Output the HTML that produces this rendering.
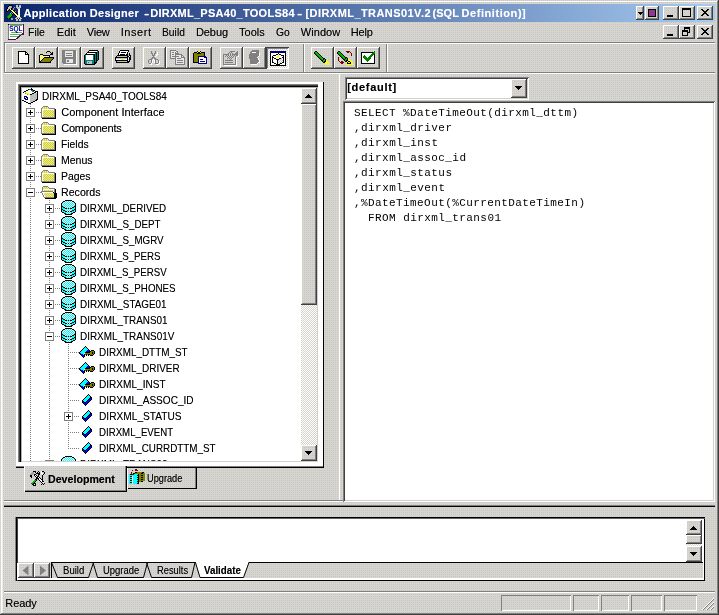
<!DOCTYPE html>
<html lang="en"><head><meta charset="utf-8"><title>Application Designer</title>
<style>
html,body{margin:0;padding:0}
body{width:719px;height:615px;overflow:hidden;background:#d4d3cd;position:relative;font:11px "Liberation Sans",sans-serif}
#app{will-change:transform;--face:repeating-conic-gradient(#c6c6ca 0 25%,#d7d6ce 0 100%) 0 0/2px 2px;position:absolute;left:0;top:0;width:719px;height:615px;overflow:hidden;background:var(--face)}
#app div,#app svg,#app span.t{position:absolute;display:block}
#app section{display:contents}
span.t{white-space:pre;text-shadow:0 0 0 rgba(0,0,0,.45)}
span.w{text-shadow:0 0 0 rgba(255,255,255,.45)}
span.m{text-shadow:none}
</style></head>
<body><div id="app">
<section id="frame" aria-label="Window frame">
<div style="left:1px;top:1px;width:1px;height:612px;background:#fff;"></div>
<div style="left:1px;top:1px;width:716px;height:1px;background:#fff;"></div>
<div style="left:717px;top:1px;width:1px;height:613px;background:#808080;"></div>
<div style="left:1px;top:613px;width:717px;height:1px;background:#808080;"></div>
<div style="left:718px;top:0px;width:1px;height:615px;background:#404040;"></div>
<div style="left:0px;top:614px;width:719px;height:1px;background:#404040;"></div>
</section>
<section id="titlebar" aria-label="Title bar">
<div style="left:4px;top:4px;width:711px;height:18px;background:linear-gradient(to right,#0a246a,#a6caf0);"></div>
<svg style="left:6px;top:5px" width="16" height="16" viewBox="0 0 16 16" shape-rendering="crispEdges"><path fill="#000" d="M3 0h3v1h-3zM2 1h1v1h-1zM6 1h1v1h-1zM1 2h1v1h-1zM6 2h1v1h-1zM1 3h1v1h-1zM5 3h1v1h-1zM0 4h1v1h-1zM3 4h1v1h-1zM5 4h1v1h-1zM0 5h1v1h-1zM2 5h1v1h-1zM4 5h1v1h-1zM7 5h1v1h-1zM0 6h2v1h-2zM5 6h1v1h-1zM8 6h1v1h-1zM6 7h1v1h-1zM9 7h1v1h-1zM7 8h1v1h-1zM10 8h1v1h-1zM6 9h1v1h-1zM8 9h1v1h-1zM11 9h1v1h-1zM6 10h1v1h-1zM9 10h1v1h-1zM5 11h1v1h-1zM10 11h1v1h-1zM4 12h1v1h-1zM1 13h1v1h-1zM3 13h1v1h-1z"/><path fill="#c0c0c0" d="M10 0h2v1h-2zM13 0h2v1h-2zM3 1h2v1h-2zM10 1h2v1h-2zM13 1h2v1h-2zM2 2h3v1h-3zM10 2h5v1h-5zM2 3h2v1h-2zM11 3h3v1h-3zM1 4h2v1h-2zM1 5h1v1h-1zM10 12h5v1h-5zM9 13h2v1h-2zM14 13h2v1h-2zM10 14h2v1h-2zM13 14h2v1h-2zM10 15h2v1h-2zM13 15h2v1h-2z"/><path fill="#a0a0a0" d="M5 1h1v1h-1zM5 2h1v1h-1zM8 2h1v1h-1zM4 3h1v1h-1zM7 3h1v1h-1zM7 4h1v1h-1zM9 6h1v1h-1zM5 7h1v1h-1zM4 8h1v1h-1zM6 8h1v1h-1zM5 13h2v1h-2zM5 14h2v1h-2z"/><path fill="#ffff80" d="M4 4h1v1h-1zM5 5h2v1h-2zM6 6h2v1h-2zM7 7h2v1h-2zM8 8h2v1h-2zM9 9h2v1h-2zM10 10h2v1h-2zM11 11h1v1h-1zM12 13h1v1h-1z"/><path fill="#fff" d="M12 4h2v1h-2zM12 5h2v1h-2zM12 6h2v1h-2zM12 7h2v1h-2zM12 8h2v1h-2zM12 9h2v1h-2zM12 10h2v1h-2zM12 11h2v1h-2z"/><path fill="#008000" d="M3 9h1v1h-1zM2 10h1v1h-1zM1 11h1v1h-1zM1 12h1v1h-1zM2 13h1v1h-1z"/><path fill="#00c000" d="M4 9h2v1h-2zM3 10h3v1h-3zM2 11h3v1h-3zM2 12h2v1h-2z"/></svg>
<span class="t w" style="left:23.6px;top:6.50px;font:bold 11px 'Liberation Sans',sans-serif;line-height:13px;color:#fff;letter-spacing:0.272px;">Application Designer </span>
<span class="t w" style="left:144.3px;top:6.50px;font:bold 11px 'Liberation Sans',sans-serif;line-height:13px;color:#fff;transform:scaleX(1.4434);transform-origin:0 0;">- </span>
<span class="t w" style="left:150.2px;top:6.50px;font:bold 11px 'Liberation Sans',sans-serif;line-height:13px;color:#fff;letter-spacing:0.272px;">DIRXML_PSA40_TOOLS84 </span>
<span class="t w" style="left:297.3px;top:6.50px;font:bold 11px 'Liberation Sans',sans-serif;line-height:13px;color:#fff;transform:scaleX(1.4434);transform-origin:0 0;">- </span>
<span class="t w" style="left:305.5px;top:6.50px;font:bold 11px 'Liberation Sans',sans-serif;line-height:13px;color:#fff;letter-spacing:0.437px;">[DIRXML_TRANS01V.2 </span>
<span class="t w" style="left:432.4px;top:6.50px;font:bold 11px 'Liberation Sans',sans-serif;line-height:13px;color:#fff;letter-spacing:0.106px;">(SQL </span>
<span class="t w" style="left:461.5px;top:6.50px;font:bold 11px 'Liberation Sans',sans-serif;line-height:13px;color:#fff;letter-spacing:0.568px;">Definition)]</span>
<div style="left:636px;top:6px;width:8px;height:14px;background:var(--face);box-shadow:inset -1px -1px #404040,inset 1px 1px #fff,inset -2px -2px #808080,inset 2px 2px #d4d0c8;"></div>
<svg style="left:636px;top:6px" width="8" height="14" viewBox="0 0 8 14" shape-rendering="crispEdges"><path d="M2 6h5v1h-1v1h-1v1h-1v-1h-1v-1h-1z" fill="#000"/></svg>
<div style="left:645px;top:6px;width:14px;height:14px;background:var(--face);box-shadow:inset -1px -1px #404040,inset 1px 1px #fff,inset -2px -2px #808080,inset 2px 2px #d4d0c8;"></div>
<svg style="left:645px;top:6px" width="14" height="14" viewBox="0 0 14 14" shape-rendering="crispEdges"><rect x="3" y="3" width="8" height="8" fill="#000"/><rect x="4" y="4" width="6" height="6" fill="#903890"/></svg>
<div style="left:663px;top:6px;width:16px;height:14px;background:var(--face);box-shadow:inset -1px -1px #404040,inset 1px 1px #fff,inset -2px -2px #808080,inset 2px 2px #d4d0c8;"></div>
<svg style="left:663px;top:6px" width="16" height="14" viewBox="0 0 16 14" shape-rendering="crispEdges"><rect x="4" y="9" width="6" height="2" fill="#000"/></svg>
<div style="left:679px;top:6px;width:16px;height:14px;background:var(--face);box-shadow:inset -1px -1px #404040,inset 1px 1px #fff,inset -2px -2px #808080,inset 2px 2px #d4d0c8;"></div>
<svg style="left:679px;top:6px" width="16" height="14" viewBox="0 0 16 14" shape-rendering="crispEdges"><path d="M3 2h9v9h-9z M4 4v6h7v-6z" fill="#000" fill-rule="evenodd"/></svg>
<div style="left:697px;top:6px;width:16px;height:14px;background:var(--face);box-shadow:inset -1px -1px #404040,inset 1px 1px #fff,inset -2px -2px #808080,inset 2px 2px #d4d0c8;"></div>
<svg style="left:697px;top:6px" width="16" height="14" viewBox="0 0 16 14" shape-rendering="crispEdges"><path d="M4 3h2v1h1v1h2v-1h1v-1h2v1h-1v1h-1v1h-1v1h1v1h1v1h1v1h-2v-1h-1v-1h-2v1h-1v1h-2v-1h1v-1h1v-1h1v-1h-1v-1h-1v-1h-1z" fill="#000"/></svg>
<div style="left:663px;top:25px;width:16px;height:14px;background:var(--face);box-shadow:inset -1px -1px #404040,inset 1px 1px #fff,inset -2px -2px #808080,inset 2px 2px #d4d0c8;"></div>
<svg style="left:663px;top:25px" width="16" height="14" viewBox="0 0 16 14" shape-rendering="crispEdges"><rect x="4" y="9" width="6" height="2" fill="#000"/></svg>
<div style="left:679px;top:25px;width:16px;height:14px;background:var(--face);box-shadow:inset -1px -1px #404040,inset 1px 1px #fff,inset -2px -2px #808080,inset 2px 2px #d4d0c8;"></div>
<svg style="left:679px;top:25px" width="16" height="14" viewBox="0 0 16 14" shape-rendering="crispEdges"><path d="M5 2h6v6h-2v-1h1v-3h-4v1h-1z M3 5h6v6h-6z M4 7v3h4v-3z" fill="#000" fill-rule="evenodd"/></svg>
<div style="left:697px;top:25px;width:16px;height:14px;background:var(--face);box-shadow:inset -1px -1px #404040,inset 1px 1px #fff,inset -2px -2px #808080,inset 2px 2px #d4d0c8;"></div>
<svg style="left:697px;top:25px" width="16" height="14" viewBox="0 0 16 14" shape-rendering="crispEdges"><path d="M4 3h2v1h1v1h2v-1h1v-1h2v1h-1v1h-1v1h-1v1h1v1h1v1h1v1h-2v-1h-1v-1h-2v1h-1v1h-2v-1h1v-1h1v-1h1v-1h-1v-1h-1v-1h-1z" fill="#000"/></svg>
</section>
<section id="menubar" aria-label="Menu bar">
<svg style="left:8px;top:24px" width="16" height="16" viewBox="0 0 16 16" shape-rendering="crispEdges"><path fill="#000" d="M0 0h1v1h-1z"/><path fill="#808080" d="M1 0h14v1h-14zM0 1h1v1h-1zM0 2h1v1h-1zM0 3h1v1h-1zM0 4h1v1h-1zM0 5h1v1h-1zM0 6h1v1h-1zM0 7h1v1h-1zM0 8h1v1h-1zM0 9h1v1h-1zM0 10h1v1h-1zM0 11h1v1h-1zM0 12h1v1h-1zM0 13h1v1h-1zM0 14h1v1h-1z"/><path fill="#600060" d="M15 0h1v1h-1zM15 1h1v1h-1zM15 2h1v1h-1zM15 3h1v1h-1zM15 4h1v1h-1zM15 5h1v1h-1zM15 6h1v1h-1zM15 7h1v1h-1zM15 8h1v1h-1zM14 9h2v1h-2zM13 10h3v1h-3zM11 11h2v1h-2zM10 12h2v1h-2zM9 13h2v1h-2zM8 14h2v1h-2zM0 15h8v1h-8z"/><path fill="#fff" d="M1 1h1v1h-1zM14 1h1v1h-1zM1 2h14v1h-14zM1 3h14v1h-14zM1 4h14v1h-14zM1 5h14v1h-14zM1 6h14v1h-14zM1 7h14v1h-14zM1 8h2v1h-2zM14 8h1v1h-1zM1 9h13v1h-13zM1 10h1v1h-1zM1 11h10v1h-10zM1 12h1v1h-1zM1 13h8v1h-8zM1 14h7v1h-7z"/><path fill="#58b858" d="M2 1h12v1h-12zM3 8h11v1h-11zM2 10h11v1h-11zM2 12h8v1h-8z"/></svg>
<svg style="left:8px;top:24px" width="16" height="16" viewBox="0 0 16 16"><text x="1.2" y="7.2" font-family="Liberation Sans, sans-serif" font-weight="bold" font-size="6.6" fill="#000090" textLength="13.4" lengthAdjust="spacingAndGlyphs">SQL</text></svg>
<span class="t" style="left:28.4px;top:25.50px;font:11px 'Liberation Sans',sans-serif;line-height:13px;color:#000;transform:scaleX(0.9530);transform-origin:0 0;">File</span>
<span class="t" style="left:56.8px;top:25.50px;font:11px 'Liberation Sans',sans-serif;line-height:13px;color:#000;letter-spacing:0.010px;">Edit</span>
<span class="t" style="left:86.8px;top:25.50px;font:11px 'Liberation Sans',sans-serif;line-height:13px;color:#000;letter-spacing:-0.219px;">View</span>
<span class="t" style="left:120.7px;top:25.50px;font:11px 'Liberation Sans',sans-serif;line-height:13px;color:#000;letter-spacing:0.557px;">Insert</span>
<span class="t" style="left:161.9px;top:25.50px;font:11px 'Liberation Sans',sans-serif;line-height:13px;color:#000;transform:scaleX(0.9359);transform-origin:0 0;">Build</span>
<span class="t" style="left:195.9px;top:25.50px;font:11px 'Liberation Sans',sans-serif;line-height:13px;color:#000;letter-spacing:-0.055px;">Debug</span>
<span class="t" style="left:239.0px;top:25.50px;font:11px 'Liberation Sans',sans-serif;line-height:13px;color:#000;letter-spacing:0.028px;">Tools</span>
<span class="t" style="left:276.0px;top:25.50px;font:11px 'Liberation Sans',sans-serif;line-height:13px;color:#000;transform:scaleX(0.9396);transform-origin:0 0;">Go</span>
<span class="t" style="left:300.8px;top:25.50px;font:11px 'Liberation Sans',sans-serif;line-height:13px;color:#000;letter-spacing:0.055px;">Window</span>
<span class="t" style="left:350.8px;top:25.50px;font:11px 'Liberation Sans',sans-serif;line-height:13px;color:#000;letter-spacing:-0.208px;">Help</span>
</section>
<section id="toolbars" aria-label="Toolbars">
<div style="left:4px;top:42px;width:711px;height:1px;background:#808080;"></div>
<div style="left:4px;top:43px;width:711px;height:1px;background:#fff;"></div>
<div style="left:4px;top:43px;width:1px;height:29px;background:#808080;"></div>
<div style="left:5px;top:44px;width:1px;height:28px;background:#fff;"></div>
<div style="left:303px;top:44px;width:1px;height:28px;background:#808080;"></div>
<div style="left:304px;top:44px;width:1px;height:28px;background:#fff;"></div>
<div style="left:386px;top:44px;width:1px;height:28px;background:#808080;"></div>
<div style="left:387px;top:44px;width:1px;height:28px;background:#fff;"></div>
<div style="left:4px;top:72px;width:711px;height:1px;background:#808080;"></div>
<div style="left:4px;top:73px;width:711px;height:1px;background:#fff;"></div>
<div style="left:12px;top:47px;width:23px;height:22px;background:var(--face);box-shadow:inset -1px -1px #404040,inset 1px 1px #fff,inset -2px -2px #808080,inset 2px 2px #d4d0c8;"></div>
<svg style="left:15px;top:50px" width="16" height="15" viewBox="0 0 16 15" shape-rendering="crispEdges"><path fill="#000" d="M3 1h8v1h-8zM3 2h1v1h-1zM10 2h2v1h-2zM3 3h1v1h-1zM10 3h1v1h-1zM12 3h1v1h-1zM3 4h1v1h-1zM10 4h4v1h-4zM3 5h1v1h-1zM13 5h1v1h-1zM3 6h1v1h-1zM13 6h1v1h-1zM3 7h1v1h-1zM13 7h1v1h-1zM3 8h1v1h-1zM13 8h1v1h-1zM3 9h1v1h-1zM13 9h1v1h-1zM3 10h1v1h-1zM13 10h1v1h-1zM3 11h1v1h-1zM13 11h1v1h-1zM3 12h1v1h-1zM13 12h1v1h-1zM3 13h11v1h-11z"/><path fill="#fff" d="M4 2h6v1h-6zM4 3h6v1h-6zM11 3h1v1h-1zM4 4h6v1h-6zM4 5h9v1h-9zM4 6h9v1h-9zM4 7h9v1h-9zM4 8h9v1h-9zM4 9h9v1h-9zM4 10h9v1h-9zM4 11h9v1h-9zM4 12h9v1h-9z"/></svg>
<div style="left:35px;top:47px;width:23px;height:22px;background:var(--face);box-shadow:inset -1px -1px #404040,inset 1px 1px #fff,inset -2px -2px #808080,inset 2px 2px #d4d0c8;"></div>
<svg style="left:38px;top:50px" width="16" height="15" viewBox="0 0 16 15" shape-rendering="crispEdges"><path fill="#000" d="M9 1h3v1h-3zM8 2h1v1h-1zM12 2h1v1h-1zM14 2h1v1h-1zM13 3h2v1h-2zM2 4h3v1h-3zM12 4h3v1h-3zM1 5h1v1h-1zM5 5h7v1h-7zM1 6h1v1h-1zM11 6h1v1h-1zM1 7h1v1h-1zM6 7h10v1h-10zM1 8h1v1h-1zM5 8h1v1h-1zM15 8h1v1h-1zM1 9h1v1h-1zM4 9h1v1h-1zM14 9h1v1h-1zM1 10h1v1h-1zM3 10h1v1h-1zM13 10h1v1h-1zM1 11h2v1h-2zM12 11h1v1h-1zM1 12h12v1h-12z"/><path fill="#ffff00" d="M2 5h1v1h-1zM4 5h1v1h-1zM3 6h1v1h-1zM5 6h1v1h-1zM7 6h1v1h-1zM9 6h1v1h-1zM2 7h1v1h-1zM4 7h1v1h-1zM3 8h1v1h-1zM2 9h1v1h-1z"/><path fill="#fff" d="M3 5h1v1h-1zM2 6h1v1h-1zM4 6h1v1h-1zM6 6h1v1h-1zM8 6h1v1h-1zM10 6h1v1h-1zM3 7h1v1h-1zM5 7h1v1h-1zM2 8h1v1h-1zM4 8h1v1h-1zM3 9h1v1h-1zM2 10h1v1h-1z"/><path fill="#808000" d="M6 8h9v1h-9zM5 9h9v1h-9zM4 10h9v1h-9zM3 11h9v1h-9z"/></svg>
<div style="left:58px;top:47px;width:23px;height:22px;background:var(--face);box-shadow:inset -1px -1px #404040,inset 1px 1px #fff,inset -2px -2px #808080,inset 2px 2px #d4d0c8;"></div>
<svg style="left:61px;top:50px" width="16" height="15" viewBox="0 0 16 15" shape-rendering="crispEdges"><path fill="#808080" d="M1 0h14v1h-14zM1 1h3v1h-3zM12 1h3v1h-3zM1 2h3v1h-3zM12 2h3v1h-3zM1 3h3v1h-3zM5 3h6v1h-6zM12 3h3v1h-3zM1 4h3v1h-3zM12 4h3v1h-3zM1 5h3v1h-3zM5 5h6v1h-6zM12 5h3v1h-3zM1 6h3v1h-3zM12 6h3v1h-3zM1 7h14v1h-14zM1 8h14v1h-14zM1 9h4v1h-4zM12 9h3v1h-3zM1 10h4v1h-4zM6 10h2v1h-2zM12 10h3v1h-3zM1 11h4v1h-4zM6 11h2v1h-2zM12 11h3v1h-3zM1 12h4v1h-4zM12 12h3v1h-3zM2 13h13v1h-13z"/><path fill="#e8e8e8" d="M4 1h8v1h-8zM4 2h8v1h-8zM4 3h1v1h-1zM11 3h1v1h-1zM4 4h8v1h-8zM4 5h1v1h-1zM11 5h1v1h-1zM4 6h8v1h-8zM5 9h7v1h-7zM5 10h1v1h-1zM8 10h4v1h-4zM5 11h1v1h-1zM8 11h4v1h-4zM5 12h7v1h-7z"/><path fill="#fff" d="M15 1h1v1h-1zM15 2h1v1h-1zM15 3h1v1h-1zM15 4h1v1h-1zM15 5h1v1h-1zM15 6h1v1h-1zM15 7h1v1h-1zM15 8h1v1h-1zM15 9h1v1h-1zM15 10h1v1h-1zM15 11h1v1h-1zM15 12h1v1h-1zM15 13h1v1h-1zM3 14h13v1h-13z"/></svg>
<div style="left:81px;top:47px;width:23px;height:22px;background:var(--face);box-shadow:inset -1px -1px #404040,inset 1px 1px #fff,inset -2px -2px #808080,inset 2px 2px #d4d0c8;"></div>
<svg style="left:84px;top:50px" width="16" height="15" viewBox="0 0 16 15" shape-rendering="crispEdges"><path fill="#000" d="M5 0h9v1h-9zM4 1h1v1h-1zM14 1h1v1h-1zM3 2h10v1h-10zM14 2h1v1h-1zM2 3h1v1h-1zM12 3h1v1h-1zM14 3h1v1h-1zM1 4h10v1h-10zM12 4h1v1h-1zM14 4h1v1h-1zM0 5h1v1h-1zM10 5h1v1h-1zM12 5h1v1h-1zM14 5h1v1h-1zM0 6h1v1h-1zM10 6h1v1h-1zM12 6h1v1h-1zM14 6h1v1h-1zM0 7h1v1h-1zM10 7h1v1h-1zM12 7h1v1h-1zM14 7h1v1h-1zM0 8h1v1h-1zM10 8h1v1h-1zM12 8h1v1h-1zM14 8h1v1h-1zM0 9h1v1h-1zM10 9h1v1h-1zM12 9h1v1h-1zM14 9h1v1h-1zM0 10h1v1h-1zM10 10h1v1h-1zM12 10h2v1h-2zM0 11h1v1h-1zM10 11h1v1h-1zM12 11h1v1h-1zM0 12h1v1h-1zM10 12h3v1h-3zM0 13h1v1h-1zM10 13h2v1h-2zM1 14h10v1h-10z"/><path fill="#fff" d="M5 1h8v1h-8zM3 3h8v1h-8zM2 5h7v1h-7zM2 6h7v1h-7zM2 7h7v1h-7zM2 8h7v1h-7zM2 9h7v1h-7z"/><path fill="#008080" d="M13 1h1v1h-1zM13 2h1v1h-1zM11 3h1v1h-1zM13 3h1v1h-1zM11 4h1v1h-1zM13 4h1v1h-1zM1 5h1v1h-1zM9 5h1v1h-1zM11 5h1v1h-1zM13 5h1v1h-1zM1 6h1v1h-1zM9 6h1v1h-1zM11 6h1v1h-1zM13 6h1v1h-1zM1 7h1v1h-1zM9 7h1v1h-1zM11 7h1v1h-1zM13 7h1v1h-1zM1 8h1v1h-1zM9 8h1v1h-1zM11 8h1v1h-1zM13 8h1v1h-1zM1 9h1v1h-1zM9 9h1v1h-1zM11 9h1v1h-1zM13 9h1v1h-1zM1 10h9v1h-9zM11 10h1v1h-1zM1 11h2v1h-2zM8 11h2v1h-2zM11 11h1v1h-1zM1 12h2v1h-2zM4 12h1v1h-1zM8 12h2v1h-2zM1 13h2v1h-2zM8 13h2v1h-2z"/><path fill="#c0c0c0" d="M3 11h5v1h-5zM3 12h1v1h-1zM5 12h3v1h-3zM3 13h5v1h-5z"/></svg>
<div style="left:112px;top:47px;width:23px;height:22px;background:var(--face);box-shadow:inset -1px -1px #404040,inset 1px 1px #fff,inset -2px -2px #808080,inset 2px 2px #d4d0c8;"></div>
<svg style="left:115px;top:50px" width="16" height="15" viewBox="0 0 16 15" shape-rendering="crispEdges"><path fill="#000" d="M5 0h9v1h-9zM4 1h1v1h-1zM13 1h1v1h-1zM4 2h1v1h-1zM6 2h5v1h-5zM12 2h1v1h-1zM3 3h1v1h-1zM12 3h1v1h-1zM14 3h1v1h-1zM3 4h1v1h-1zM5 4h5v1h-5zM11 4h2v1h-2zM14 4h1v1h-1zM2 5h11v1h-11zM14 5h2v1h-2zM1 6h1v1h-1zM12 6h2v1h-2zM15 6h1v1h-1zM0 7h13v1h-13zM14 7h2v1h-2zM0 8h1v1h-1zM12 8h1v1h-1zM14 8h2v1h-2zM0 9h1v1h-1zM12 9h1v1h-1zM14 9h2v1h-2zM0 10h13v1h-13zM14 10h1v1h-1zM1 11h1v1h-1zM12 11h3v1h-3zM1 12h13v1h-13z"/><path fill="#fff" d="M5 1h8v1h-8zM5 2h1v1h-1zM11 2h1v1h-1zM4 3h8v1h-8zM4 4h1v1h-1zM10 4h1v1h-1zM14 6h1v1h-1zM13 8h1v1h-1zM1 9h5v1h-5zM9 9h3v1h-3zM13 10h1v1h-1z"/><path fill="#c0c0c0" d="M13 4h1v1h-1zM13 5h1v1h-1zM2 6h10v1h-10zM13 7h1v1h-1zM1 8h11v1h-11zM13 9h1v1h-1zM2 11h10v1h-10z"/><path fill="#ffff00" d="M6 9h3v1h-3z"/></svg>
<div style="left:143px;top:47px;width:23px;height:22px;background:var(--face);box-shadow:inset -1px -1px #404040,inset 1px 1px #fff,inset -2px -2px #808080,inset 2px 2px #d4d0c8;"></div>
<svg style="left:146px;top:50px" width="16" height="15" viewBox="0 0 16 15" shape-rendering="crispEdges"><path fill="#808080" d="M5 1h1v1h-1zM9 1h1v1h-1zM5 2h1v1h-1zM9 2h1v1h-1zM5 3h2v1h-2zM8 3h2v1h-2zM6 4h1v1h-1zM8 4h1v1h-1zM6 5h3v1h-3zM7 6h1v1h-1zM6 7h3v1h-3zM5 8h2v1h-2zM8 8h2v1h-2zM3 9h3v1h-3zM9 9h3v1h-3zM2 10h1v1h-1zM5 10h1v1h-1zM9 10h1v1h-1zM12 10h1v1h-1zM2 11h1v1h-1zM5 11h1v1h-1zM9 11h1v1h-1zM12 11h1v1h-1zM2 12h1v1h-1zM5 12h1v1h-1zM9 12h1v1h-1zM12 12h1v1h-1zM3 13h2v1h-2zM9 13h3v1h-3z"/><path fill="#fff" d="M11 2h1v1h-1zM11 3h1v1h-1zM10 4h2v1h-2zM10 5h1v1h-1zM9 6h1v1h-1zM7 9h1v1h-1zM6 10h1v1h-1zM8 10h1v1h-1zM6 11h1v1h-1zM8 11h1v1h-1zM13 11h1v1h-1zM6 12h1v1h-1zM8 12h1v1h-1zM13 12h1v1h-1zM5 13h1v1h-1zM13 13h1v1h-1zM4 14h2v1h-2zM10 14h3v1h-3z"/></svg>
<div style="left:166px;top:47px;width:23px;height:22px;background:var(--face);box-shadow:inset -1px -1px #404040,inset 1px 1px #fff,inset -2px -2px #808080,inset 2px 2px #d4d0c8;"></div>
<svg style="left:169px;top:50px" width="16" height="15" viewBox="0 0 16 15" shape-rendering="crispEdges"><path fill="#808080" d="M1 0h6v1h-6zM1 1h1v1h-1zM7 1h2v1h-2zM1 2h1v1h-1zM3 2h2v1h-2zM6 2h1v1h-1zM8 2h1v1h-1zM1 3h1v1h-1zM6 3h4v1h-4zM1 4h1v1h-1zM3 4h2v1h-2zM6 4h7v1h-7zM1 5h1v1h-1zM6 5h1v1h-1zM12 5h2v1h-2zM1 6h1v1h-1zM3 6h7v1h-7zM12 6h1v1h-1zM14 6h1v1h-1zM1 7h1v1h-1zM6 7h1v1h-1zM12 7h4v1h-4zM1 8h6v1h-6zM8 8h4v1h-4zM15 8h1v1h-1zM6 9h1v1h-1zM15 9h1v1h-1zM6 10h1v1h-1zM8 10h6v1h-6zM15 10h1v1h-1zM6 11h1v1h-1zM15 11h1v1h-1zM6 12h1v1h-1zM8 12h6v1h-6zM15 12h1v1h-1zM6 13h1v1h-1zM15 13h1v1h-1zM6 14h10v1h-10z"/><path fill="#e8e8e8" d="M2 1h5v1h-5zM2 2h1v1h-1zM5 2h1v1h-1zM7 2h1v1h-1zM2 3h4v1h-4zM2 4h1v1h-1zM5 4h1v1h-1zM2 5h4v1h-4zM7 5h5v1h-5zM2 6h1v1h-1zM10 6h2v1h-2zM13 6h1v1h-1zM2 7h4v1h-4zM7 7h5v1h-5zM7 8h1v1h-1zM12 8h3v1h-3zM7 9h8v1h-8zM7 10h1v1h-1zM14 10h1v1h-1zM7 11h8v1h-8zM7 12h1v1h-1zM14 12h1v1h-1zM7 13h8v1h-8z"/></svg>
<div style="left:189px;top:47px;width:23px;height:22px;background:var(--face);box-shadow:inset -1px -1px #404040,inset 1px 1px #fff,inset -2px -2px #808080,inset 2px 2px #d4d0c8;"></div>
<svg style="left:192px;top:50px" width="16" height="15" viewBox="0 0 16 15" shape-rendering="crispEdges"><path fill="#000" d="M5 1h1v1h-1zM8 1h1v1h-1zM2 2h3v1h-3zM6 2h2v1h-2zM9 2h4v1h-4zM1 3h1v1h-1zM5 3h4v1h-4zM12 3h1v1h-1zM1 4h1v1h-1zM12 4h1v1h-1zM1 5h1v1h-1zM12 5h1v1h-1zM1 6h1v1h-1zM1 7h1v1h-1zM1 8h1v1h-1zM1 9h1v1h-1zM1 10h1v1h-1zM1 11h1v1h-1zM1 12h5v1h-5z"/><path fill="#ffff00" d="M6 1h2v1h-2zM5 2h1v1h-1zM8 2h1v1h-1z"/><path fill="#808000" d="M2 3h3v1h-3zM9 3h3v1h-3zM2 4h10v1h-10zM2 5h10v1h-10zM2 6h4v1h-4zM2 7h4v1h-4zM2 8h4v1h-4zM2 9h4v1h-4zM2 10h4v1h-4zM2 11h4v1h-4z"/><path fill="#000080" d="M6 6h8v1h-8zM6 7h1v1h-1zM12 7h3v1h-3zM6 8h1v1h-1zM14 8h1v1h-1zM6 9h1v1h-1zM8 9h3v1h-3zM14 9h1v1h-1zM6 10h1v1h-1zM14 10h1v1h-1zM6 11h1v1h-1zM8 11h5v1h-5zM14 11h1v1h-1zM6 12h1v1h-1zM14 12h1v1h-1zM6 13h9v1h-9z"/><path fill="#fff" d="M7 7h5v1h-5zM7 8h7v1h-7zM7 9h1v1h-1zM11 9h3v1h-3zM7 10h7v1h-7zM7 11h1v1h-1zM13 11h1v1h-1zM7 12h7v1h-7z"/></svg>
<div style="left:220px;top:47px;width:23px;height:22px;background:var(--face);box-shadow:inset -1px -1px #404040,inset 1px 1px #fff,inset -2px -2px #808080,inset 2px 2px #d4d0c8;"></div>
<svg style="left:223px;top:50px" width="16" height="16" viewBox="0 0 16 16" shape-rendering="crispEdges"><path fill="#808080" d="M7 1h5v1h-5zM14 1h1v1h-1zM6 2h1v1h-1zM8 2h1v1h-1zM13 2h2v1h-2zM5 3h1v1h-1zM7 3h1v1h-1zM9 3h1v1h-1zM12 3h3v1h-3zM0 4h6v1h-6zM7 4h1v1h-1zM9 4h6v1h-6zM0 5h1v1h-1zM3 5h1v1h-1zM5 5h1v1h-1zM7 5h1v1h-1zM9 5h1v1h-1zM11 5h1v1h-1zM13 5h2v1h-2zM0 6h1v1h-1zM2 6h1v1h-1zM4 6h1v1h-1zM6 6h1v1h-1zM8 6h1v1h-1zM10 6h1v1h-1zM12 6h1v1h-1zM0 7h1v1h-1zM5 7h1v1h-1zM7 7h1v1h-1zM9 7h1v1h-1zM12 7h1v1h-1zM0 8h1v1h-1zM4 8h1v1h-1zM6 8h1v1h-1zM8 8h1v1h-1zM12 8h1v1h-1zM0 9h1v1h-1zM7 9h1v1h-1zM12 9h1v1h-1zM0 10h1v1h-1zM2 10h8v1h-8zM12 10h1v1h-1zM0 11h1v1h-1zM12 11h1v1h-1zM0 12h1v1h-1zM2 12h8v1h-8zM12 12h1v1h-1zM0 13h1v1h-1zM12 13h1v1h-1zM0 14h13v1h-13z"/><path fill="#fff" d="M15 5h1v1h-1zM15 6h1v1h-1zM13 7h1v1h-1zM13 8h1v1h-1zM13 9h1v1h-1zM13 10h1v1h-1zM13 11h1v1h-1zM13 12h1v1h-1zM13 13h1v1h-1zM13 14h1v1h-1zM1 15h13v1h-13z"/></svg>
<div style="left:243px;top:47px;width:23px;height:22px;background:var(--face);box-shadow:inset -1px -1px #404040,inset 1px 1px #fff,inset -2px -2px #808080,inset 2px 2px #d4d0c8;"></div>
<svg style="left:246px;top:50px" width="16" height="15" viewBox="0 0 16 15" shape-rendering="crispEdges"><path fill="#808080" d="M6 0h7v1h-7zM5 1h8v1h-8zM4 2h2v1h-2zM10 2h3v1h-3zM4 3h9v1h-9zM3 4h10v1h-10zM3 5h10v1h-10zM3 6h9v1h-9zM3 7h8v1h-8zM3 8h9v1h-9zM4 9h8v1h-8zM4 10h9v1h-9zM4 11h9v1h-9zM4 12h8v1h-8zM4 13h7v1h-7z"/><path fill="#fff" d="M6 2h4v1h-4zM13 3h1v1h-1zM13 4h1v1h-1zM13 5h1v1h-1zM12 6h1v1h-1zM11 7h1v1h-1zM12 8h1v1h-1zM12 9h1v1h-1zM13 10h1v1h-1zM13 11h1v1h-1zM12 12h2v1h-2zM11 13h1v1h-1zM5 14h6v1h-6z"/></svg>
<div style="left:266px;top:47px;width:23px;height:22px;background:repeating-conic-gradient(#fff 0 25%,#d5d4cc 0 50%) 0 0/2px 2px;box-shadow:inset 1px 1px #404040,inset -1px -1px #fff,inset 2px 2px #808080;"></div>
<svg style="left:270px;top:51px" width="16" height="15" viewBox="0 0 16 15" shape-rendering="crispEdges"><path fill="#000080" d="M0 0h16v1h-16zM0 1h16v1h-16z"/><path fill="#000" d="M0 2h1v1h-1zM8 2h1v1h-1zM15 2h1v1h-1zM0 3h1v1h-1zM6 3h2v1h-2zM9 3h2v1h-2zM15 3h1v1h-1zM0 4h1v1h-1zM3 4h3v1h-3zM11 4h3v1h-3zM15 4h1v1h-1zM0 5h1v1h-1zM2 5h1v1h-1zM13 5h1v1h-1zM15 5h1v1h-1zM0 6h1v1h-1zM2 6h2v1h-2zM12 6h2v1h-2zM15 6h1v1h-1zM0 7h1v1h-1zM2 7h1v1h-1zM4 7h2v1h-2zM9 7h2v1h-2zM13 7h1v1h-1zM15 7h1v1h-1zM0 8h1v1h-1zM2 8h1v1h-1zM6 8h3v1h-3zM13 8h1v1h-1zM15 8h1v1h-1zM0 9h1v1h-1zM2 9h1v1h-1zM7 9h1v1h-1zM13 9h1v1h-1zM15 9h1v1h-1zM0 10h1v1h-1zM2 10h1v1h-1zM7 10h1v1h-1zM13 10h1v1h-1zM15 10h1v1h-1zM0 11h1v1h-1zM2 11h2v1h-2zM7 11h1v1h-1zM12 11h2v1h-2zM15 11h1v1h-1zM0 12h1v1h-1zM4 12h2v1h-2zM7 12h1v1h-1zM10 12h2v1h-2zM15 12h1v1h-1zM0 13h1v1h-1zM6 13h4v1h-4zM15 13h1v1h-1zM0 14h16v1h-16z"/><path fill="#fff" d="M1 2h7v1h-7zM9 2h6v1h-6zM1 3h5v1h-5zM8 3h1v1h-1zM11 3h4v1h-4zM1 4h2v1h-2zM6 4h2v1h-2zM9 4h2v1h-2zM14 4h1v1h-1zM1 5h1v1h-1zM3 5h4v1h-4zM9 5h4v1h-4zM14 5h1v1h-1zM1 6h1v1h-1zM4 6h2v1h-2zM9 6h3v1h-3zM14 6h1v1h-1zM1 7h1v1h-1zM3 7h1v1h-1zM6 7h3v1h-3zM12 7h1v1h-1zM14 7h1v1h-1zM1 8h1v1h-1zM3 8h3v1h-3zM10 8h1v1h-1zM12 8h1v1h-1zM14 8h1v1h-1zM1 9h1v1h-1zM3 9h4v1h-4zM9 9h1v1h-1zM11 9h1v1h-1zM14 9h1v1h-1zM1 10h1v1h-1zM3 10h4v1h-4zM8 10h1v1h-1zM10 10h1v1h-1zM12 10h1v1h-1zM14 10h1v1h-1zM1 11h1v1h-1zM4 11h3v1h-3zM9 11h1v1h-1zM11 11h1v1h-1zM14 11h1v1h-1zM1 12h3v1h-3zM6 12h1v1h-1zM8 12h1v1h-1zM12 12h3v1h-3zM1 13h5v1h-5zM10 13h5v1h-5z"/><path fill="#ffff00" d="M8 4h1v1h-1zM7 5h2v1h-2zM6 6h3v1h-3z"/><path fill="#c0c0c0" d="M11 7h1v1h-1zM9 8h1v1h-1zM11 8h1v1h-1zM8 9h1v1h-1zM10 9h1v1h-1zM12 9h1v1h-1zM9 10h1v1h-1zM11 10h1v1h-1zM8 11h1v1h-1zM10 11h1v1h-1zM9 12h1v1h-1z"/></svg>
<div style="left:311px;top:47px;width:23px;height:22px;background:var(--face);box-shadow:inset -1px -1px #404040,inset 1px 1px #fff,inset -2px -2px #808080,inset 2px 2px #d4d0c8;"></div>
<svg style="left:314px;top:50px" width="16" height="15" viewBox="0 0 16 15" shape-rendering="crispEdges"><path fill="#000" d="M1 1h2v1h-2zM0 2h1v1h-1zM3 2h1v1h-1zM0 3h1v1h-1zM4 3h1v1h-1zM1 4h1v1h-1zM5 4h1v1h-1zM2 5h1v1h-1zM6 5h1v1h-1zM3 6h1v1h-1zM7 6h1v1h-1zM4 7h1v1h-1zM8 7h1v1h-1zM5 8h1v1h-1zM9 8h2v1h-2zM6 9h1v1h-1zM9 9h1v1h-1zM11 9h1v1h-1zM7 10h2v1h-2zM11 10h1v1h-1zM8 11h1v1h-1zM10 11h2v1h-2zM9 12h2v1h-2z"/><path fill="#00c000" d="M1 2h2v1h-2zM2 3h2v1h-2zM3 4h2v1h-2zM4 5h2v1h-2zM5 6h2v1h-2zM6 7h2v1h-2zM7 8h2v1h-2zM8 9h1v1h-1zM10 9h1v1h-1zM9 10h2v1h-2zM9 11h1v1h-1z"/><path fill="#008000" d="M1 3h1v1h-1zM2 4h1v1h-1zM3 5h1v1h-1zM4 6h1v1h-1zM5 7h1v1h-1zM6 8h1v1h-1zM7 9h1v1h-1z"/><path fill="#ffff00" d="M12 10h1v1h-1zM12 11h2v1h-2zM11 12h4v1h-4zM9 13h1v1h-1zM11 13h2v1h-2zM14 13h1v1h-1zM10 14h1v1h-1zM12 14h1v1h-1zM14 14h1v1h-1z"/></svg>
<div style="left:334px;top:47px;width:23px;height:22px;background:var(--face);box-shadow:inset -1px -1px #404040,inset 1px 1px #fff,inset -2px -2px #808080,inset 2px 2px #d4d0c8;"></div>
<svg style="left:337px;top:50px" width="16" height="15" viewBox="0 0 16 15" shape-rendering="crispEdges"><path fill="#000" d="M1 1h2v1h-2zM0 2h1v1h-1zM3 2h1v1h-1zM0 3h1v1h-1zM4 3h1v1h-1zM1 4h1v1h-1zM5 4h1v1h-1zM2 5h1v1h-1zM6 5h1v1h-1zM3 6h1v1h-1zM7 6h1v1h-1zM4 7h1v1h-1zM8 7h2v1h-2zM5 8h1v1h-1zM8 8h1v1h-1zM10 8h1v1h-1zM6 9h2v1h-2zM10 9h1v1h-1zM7 10h1v1h-1zM9 10h2v1h-2zM8 11h2v1h-2zM11 11h2v1h-2zM10 12h1v1h-1zM13 12h1v1h-1zM10 13h4v1h-4z"/><path fill="#800000" d="M9 1h4v1h-4zM10 2h2v1h-2zM13 2h1v1h-1zM14 3h1v1h-1zM14 4h1v1h-1zM14 5h1v1h-1zM1 7h1v1h-1zM1 8h1v1h-1zM1 9h1v1h-1zM1 10h1v1h-1zM2 11h1v1h-1zM4 11h2v1h-2zM3 12h4v1h-4zM4 13h2v1h-2z"/><path fill="#00c000" d="M1 2h2v1h-2zM2 3h2v1h-2zM3 4h2v1h-2zM4 5h2v1h-2zM5 6h2v1h-2zM6 7h2v1h-2zM7 8h1v1h-1zM9 8h1v1h-1zM8 9h2v1h-2zM8 10h1v1h-1z"/><path fill="#008000" d="M1 3h1v1h-1zM2 4h1v1h-1zM3 5h1v1h-1zM4 6h1v1h-1zM5 7h1v1h-1zM6 8h1v1h-1z"/><path fill="#ffff00" d="M11 9h2v1h-2zM11 10h3v1h-3zM10 11h1v1h-1zM13 11h2v1h-2zM9 12h1v1h-1zM11 12h2v1h-2zM14 12h2v1h-2zM9 13h1v1h-1zM14 13h2v1h-2zM9 14h7v1h-7z"/></svg>
<div style="left:357px;top:47px;width:23px;height:22px;background:var(--face);box-shadow:inset -1px -1px #404040,inset 1px 1px #fff,inset -2px -2px #808080,inset 2px 2px #d4d0c8;"></div>
<svg style="left:360px;top:50px" width="16" height="15" viewBox="0 0 16 15" shape-rendering="crispEdges"><path fill="#008000" d="M14 1h1v1h-1zM13 2h2v1h-2zM12 3h3v1h-3zM11 4h3v1h-3zM4 5h1v1h-1zM10 5h3v1h-3zM3 6h3v1h-3zM9 6h3v1h-3zM3 7h4v1h-4zM8 7h3v1h-3zM4 8h7v1h-7zM5 9h5v1h-5zM6 10h3v1h-3zM7 11h1v1h-1z"/><path fill="#000" d="M1 2h12v1h-12zM1 3h1v1h-1zM1 4h1v1h-1zM14 4h1v1h-1zM1 5h1v1h-1zM14 5h1v1h-1zM1 6h1v1h-1zM14 6h1v1h-1zM1 7h1v1h-1zM14 7h1v1h-1zM1 8h1v1h-1zM14 8h1v1h-1zM1 9h1v1h-1zM14 9h1v1h-1zM1 10h1v1h-1zM14 10h1v1h-1zM1 11h1v1h-1zM14 11h1v1h-1zM1 12h1v1h-1zM14 12h1v1h-1zM1 13h14v1h-14z"/><path fill="#fff" d="M2 3h10v1h-10zM2 4h9v1h-9zM2 5h2v1h-2zM5 5h5v1h-5zM13 5h1v1h-1zM2 6h1v1h-1zM6 6h3v1h-3zM12 6h2v1h-2zM2 7h1v1h-1zM7 7h1v1h-1zM11 7h3v1h-3zM2 8h2v1h-2zM11 8h3v1h-3zM2 9h3v1h-3zM10 9h4v1h-4zM2 10h4v1h-4zM9 10h5v1h-5zM2 11h5v1h-5zM8 11h6v1h-6zM2 12h12v1h-12z"/></svg>
</section>
<section id="project" aria-label="Project workspace">
<div style="left:2px;top:2px;width:1px;height:611px;background:#eeede8;"></div>
<div style="left:16px;top:82px;width:308px;height:386px;background:#fff;box-shadow:inset -1px 0 #000,inset 0 -1px #000,inset 0 -2px #808080;"></div>
<div style="left:18px;top:84px;width:300px;height:378px;background:#fff;box-shadow:inset 1px 1px #808080,inset 2px 2px #404040,inset 3px 3px #000,inset 4px 4px #b0b0b0,inset -1px -1px #d4d0c8;"></div>
<div style="left:22px;top:88px;width:279px;height:373px;overflow:hidden"><div style="left:8px;top:16px;width:1px;height:358px;background:repeating-linear-gradient(to bottom,#808080 0 1px,transparent 1px 2px);"></div><div style="left:27px;top:112px;width:1px;height:262px;background:repeating-linear-gradient(to bottom,#808080 0 1px,transparent 1px 2px);"></div><div style="left:46px;top:256px;width:1px;height:105px;background:repeating-linear-gradient(to bottom,#808080 0 1px,transparent 1px 2px);"></div><svg style="left:0px;top:0px" width="16" height="16" viewBox="0 0 16 16" shape-rendering="crispEdges"><path fill="#000" d="M9 0h1v1h-1zM6 1h1v1h-1zM9 1h2v1h-2zM4 2h2v1h-2zM11 2h2v1h-2zM2 3h2v1h-2zM13 3h3v1h-3zM1 4h1v1h-1zM12 4h2v1h-2zM15 4h1v1h-1zM10 5h2v1h-2zM15 5h1v1h-1zM8 6h2v1h-2zM15 6h1v1h-1zM15 7h1v1h-1zM15 8h1v1h-1zM15 9h1v1h-1zM15 10h1v1h-1zM14 11h2v1h-2zM0 12h2v1h-2zM13 12h2v1h-2zM2 13h2v1h-2zM11 13h2v1h-2zM4 14h2v1h-2zM9 14h2v1h-2zM6 15h3v1h-3z"/><path fill="#008080" d="M7 1h2v1h-2zM9 2h2v1h-2zM10 3h2v1h-2z"/><path fill="#fff" d="M7 2h2v1h-2zM5 3h5v1h-5zM5 4h7v1h-7zM1 5h2v1h-2zM7 5h3v1h-3zM1 6h4v1h-4zM1 7h7v1h-7zM1 8h1v1h-1zM5 8h3v1h-3zM1 9h1v1h-1zM3 9h1v1h-1zM6 9h2v1h-2zM1 10h1v1h-1zM4 10h1v1h-1zM6 10h2v1h-2zM1 11h2v1h-2zM6 11h2v1h-2zM2 12h6v1h-6zM4 13h4v1h-4zM6 14h2v1h-2z"/><path fill="#ffff00" d="M3 4h2v1h-2zM4 5h3v1h-3zM6 6h2v1h-2z"/><path fill="#808080" d="M3 5h1v1h-1zM5 6h1v1h-1z"/><path fill="#c0c0c0" d="M12 5h3v1h-3zM10 6h5v1h-5zM8 7h7v1h-7zM8 8h7v1h-7zM8 9h7v1h-7zM8 10h7v1h-7zM8 11h6v1h-6zM8 12h5v1h-5zM8 13h3v1h-3zM8 14h1v1h-1z"/><path fill="#000080" d="M2 8h3v1h-3zM2 9h1v1h-1zM4 9h2v1h-2zM2 10h2v1h-2zM5 10h1v1h-1zM3 11h3v1h-3z"/></svg><span class="t" style="left:20.2px;top:1.50px;font:11px 'Liberation Sans',sans-serif;line-height:13px;color:#000;transform:scaleX(0.9088);transform-origin:0 0;">DIRXML_PSA40_TOOLS84</span><div style="left:8px;top:24px;width:11px;height:1px;background:repeating-linear-gradient(to right,#808080 0 1px,transparent 1px 2px);"></div><div style="left:4px;top:20px;width:9px;height:9px;background:#fff;box-shadow:inset 0 0 0 1px #808080;"></div><div style="left:6px;top:24px;width:5px;height:1px;background:#000;"></div><div style="left:8px;top:22px;width:1px;height:5px;background:#000;"></div><svg style="left:19px;top:18px" width="15" height="13" viewBox="0 0 15 13" shape-rendering="crispEdges"><path fill="#808080" d="M2 0h5v1h-5zM1 1h1v1h-1zM7 1h1v1h-1zM0 2h1v1h-1zM8 2h6v1h-6zM0 3h1v1h-1zM13 3h1v1h-1zM0 4h1v1h-1zM13 4h1v1h-1zM0 5h1v1h-1zM13 5h1v1h-1zM0 6h1v1h-1zM13 6h1v1h-1zM0 7h1v1h-1zM13 7h1v1h-1zM0 8h1v1h-1zM13 8h1v1h-1zM0 9h1v1h-1zM13 9h1v1h-1zM0 10h1v1h-1zM13 10h1v1h-1zM0 11h14v1h-14z"/><path fill="#ffff00" d="M2 1h1v1h-1zM4 1h1v1h-1zM6 1h1v1h-1zM2 2h1v1h-1zM4 2h1v1h-1zM6 2h1v1h-1zM2 4h1v1h-1zM4 4h1v1h-1zM6 4h1v1h-1zM8 4h1v1h-1zM10 4h1v1h-1zM12 4h1v1h-1zM3 5h1v1h-1zM5 5h1v1h-1zM7 5h1v1h-1zM9 5h1v1h-1zM11 5h1v1h-1zM2 6h1v1h-1zM4 6h1v1h-1zM6 6h1v1h-1zM8 6h1v1h-1zM10 6h1v1h-1zM12 6h1v1h-1zM3 7h1v1h-1zM5 7h1v1h-1zM7 7h1v1h-1zM9 7h1v1h-1zM11 7h1v1h-1zM2 8h1v1h-1zM4 8h1v1h-1zM6 8h1v1h-1zM8 8h1v1h-1zM10 8h1v1h-1zM12 8h1v1h-1zM3 9h1v1h-1zM5 9h1v1h-1zM7 9h1v1h-1zM9 9h1v1h-1zM11 9h1v1h-1zM2 10h1v1h-1zM4 10h1v1h-1zM6 10h1v1h-1zM8 10h1v1h-1zM10 10h1v1h-1zM12 10h1v1h-1z"/><path fill="#c0c0c0" d="M3 1h1v1h-1zM5 1h1v1h-1zM1 2h1v1h-1zM3 2h1v1h-1zM5 2h1v1h-1zM7 2h1v1h-1zM3 4h1v1h-1zM5 4h1v1h-1zM7 4h1v1h-1zM9 4h1v1h-1zM11 4h1v1h-1zM2 5h1v1h-1zM4 5h1v1h-1zM6 5h1v1h-1zM8 5h1v1h-1zM10 5h1v1h-1zM12 5h1v1h-1zM3 6h1v1h-1zM5 6h1v1h-1zM7 6h1v1h-1zM9 6h1v1h-1zM11 6h1v1h-1zM2 7h1v1h-1zM4 7h1v1h-1zM6 7h1v1h-1zM8 7h1v1h-1zM10 7h1v1h-1zM12 7h1v1h-1zM3 8h1v1h-1zM5 8h1v1h-1zM7 8h1v1h-1zM9 8h1v1h-1zM11 8h1v1h-1zM2 9h1v1h-1zM4 9h1v1h-1zM6 9h1v1h-1zM8 9h1v1h-1zM10 9h1v1h-1zM12 9h1v1h-1zM3 10h1v1h-1zM5 10h1v1h-1zM7 10h1v1h-1zM9 10h1v1h-1zM11 10h1v1h-1z"/><path fill="#fff" d="M1 3h12v1h-12zM1 4h1v1h-1zM1 5h1v1h-1zM1 6h1v1h-1zM1 7h1v1h-1zM1 8h1v1h-1zM1 9h1v1h-1zM1 10h1v1h-1z"/><path fill="#000" d="M14 3h1v1h-1zM14 4h1v1h-1zM14 5h1v1h-1zM14 6h1v1h-1zM14 7h1v1h-1zM14 8h1v1h-1zM14 9h1v1h-1zM14 10h1v1h-1zM14 11h1v1h-1zM1 12h14v1h-14z"/></svg><span class="t" style="left:39.2px;top:17.50px;font:11px 'Liberation Sans',sans-serif;line-height:13px;color:#000;letter-spacing:0.034px;">Component Interface</span><div style="left:8px;top:40px;width:11px;height:1px;background:repeating-linear-gradient(to right,#808080 0 1px,transparent 1px 2px);"></div><div style="left:4px;top:36px;width:9px;height:9px;background:#fff;box-shadow:inset 0 0 0 1px #808080;"></div><div style="left:6px;top:40px;width:5px;height:1px;background:#000;"></div><div style="left:8px;top:38px;width:1px;height:5px;background:#000;"></div><svg style="left:19px;top:34px" width="15" height="13" viewBox="0 0 15 13" shape-rendering="crispEdges"><path fill="#808080" d="M2 0h5v1h-5zM1 1h1v1h-1zM7 1h1v1h-1zM0 2h1v1h-1zM8 2h6v1h-6zM0 3h1v1h-1zM13 3h1v1h-1zM0 4h1v1h-1zM13 4h1v1h-1zM0 5h1v1h-1zM13 5h1v1h-1zM0 6h1v1h-1zM13 6h1v1h-1zM0 7h1v1h-1zM13 7h1v1h-1zM0 8h1v1h-1zM13 8h1v1h-1zM0 9h1v1h-1zM13 9h1v1h-1zM0 10h1v1h-1zM13 10h1v1h-1zM0 11h14v1h-14z"/><path fill="#ffff00" d="M2 1h1v1h-1zM4 1h1v1h-1zM6 1h1v1h-1zM2 2h1v1h-1zM4 2h1v1h-1zM6 2h1v1h-1zM2 4h1v1h-1zM4 4h1v1h-1zM6 4h1v1h-1zM8 4h1v1h-1zM10 4h1v1h-1zM12 4h1v1h-1zM3 5h1v1h-1zM5 5h1v1h-1zM7 5h1v1h-1zM9 5h1v1h-1zM11 5h1v1h-1zM2 6h1v1h-1zM4 6h1v1h-1zM6 6h1v1h-1zM8 6h1v1h-1zM10 6h1v1h-1zM12 6h1v1h-1zM3 7h1v1h-1zM5 7h1v1h-1zM7 7h1v1h-1zM9 7h1v1h-1zM11 7h1v1h-1zM2 8h1v1h-1zM4 8h1v1h-1zM6 8h1v1h-1zM8 8h1v1h-1zM10 8h1v1h-1zM12 8h1v1h-1zM3 9h1v1h-1zM5 9h1v1h-1zM7 9h1v1h-1zM9 9h1v1h-1zM11 9h1v1h-1zM2 10h1v1h-1zM4 10h1v1h-1zM6 10h1v1h-1zM8 10h1v1h-1zM10 10h1v1h-1zM12 10h1v1h-1z"/><path fill="#c0c0c0" d="M3 1h1v1h-1zM5 1h1v1h-1zM1 2h1v1h-1zM3 2h1v1h-1zM5 2h1v1h-1zM7 2h1v1h-1zM3 4h1v1h-1zM5 4h1v1h-1zM7 4h1v1h-1zM9 4h1v1h-1zM11 4h1v1h-1zM2 5h1v1h-1zM4 5h1v1h-1zM6 5h1v1h-1zM8 5h1v1h-1zM10 5h1v1h-1zM12 5h1v1h-1zM3 6h1v1h-1zM5 6h1v1h-1zM7 6h1v1h-1zM9 6h1v1h-1zM11 6h1v1h-1zM2 7h1v1h-1zM4 7h1v1h-1zM6 7h1v1h-1zM8 7h1v1h-1zM10 7h1v1h-1zM12 7h1v1h-1zM3 8h1v1h-1zM5 8h1v1h-1zM7 8h1v1h-1zM9 8h1v1h-1zM11 8h1v1h-1zM2 9h1v1h-1zM4 9h1v1h-1zM6 9h1v1h-1zM8 9h1v1h-1zM10 9h1v1h-1zM12 9h1v1h-1zM3 10h1v1h-1zM5 10h1v1h-1zM7 10h1v1h-1zM9 10h1v1h-1zM11 10h1v1h-1z"/><path fill="#fff" d="M1 3h12v1h-12zM1 4h1v1h-1zM1 5h1v1h-1zM1 6h1v1h-1zM1 7h1v1h-1zM1 8h1v1h-1zM1 9h1v1h-1zM1 10h1v1h-1z"/><path fill="#000" d="M14 3h1v1h-1zM14 4h1v1h-1zM14 5h1v1h-1zM14 6h1v1h-1zM14 7h1v1h-1zM14 8h1v1h-1zM14 9h1v1h-1zM14 10h1v1h-1zM14 11h1v1h-1zM1 12h14v1h-14z"/></svg><span class="t" style="left:39.2px;top:33.50px;font:11px 'Liberation Sans',sans-serif;line-height:13px;color:#000;letter-spacing:-0.197px;">Components</span><div style="left:8px;top:56px;width:11px;height:1px;background:repeating-linear-gradient(to right,#808080 0 1px,transparent 1px 2px);"></div><div style="left:4px;top:52px;width:9px;height:9px;background:#fff;box-shadow:inset 0 0 0 1px #808080;"></div><div style="left:6px;top:56px;width:5px;height:1px;background:#000;"></div><div style="left:8px;top:54px;width:1px;height:5px;background:#000;"></div><svg style="left:19px;top:50px" width="15" height="13" viewBox="0 0 15 13" shape-rendering="crispEdges"><path fill="#808080" d="M2 0h5v1h-5zM1 1h1v1h-1zM7 1h1v1h-1zM0 2h1v1h-1zM8 2h6v1h-6zM0 3h1v1h-1zM13 3h1v1h-1zM0 4h1v1h-1zM13 4h1v1h-1zM0 5h1v1h-1zM13 5h1v1h-1zM0 6h1v1h-1zM13 6h1v1h-1zM0 7h1v1h-1zM13 7h1v1h-1zM0 8h1v1h-1zM13 8h1v1h-1zM0 9h1v1h-1zM13 9h1v1h-1zM0 10h1v1h-1zM13 10h1v1h-1zM0 11h14v1h-14z"/><path fill="#ffff00" d="M2 1h1v1h-1zM4 1h1v1h-1zM6 1h1v1h-1zM2 2h1v1h-1zM4 2h1v1h-1zM6 2h1v1h-1zM2 4h1v1h-1zM4 4h1v1h-1zM6 4h1v1h-1zM8 4h1v1h-1zM10 4h1v1h-1zM12 4h1v1h-1zM3 5h1v1h-1zM5 5h1v1h-1zM7 5h1v1h-1zM9 5h1v1h-1zM11 5h1v1h-1zM2 6h1v1h-1zM4 6h1v1h-1zM6 6h1v1h-1zM8 6h1v1h-1zM10 6h1v1h-1zM12 6h1v1h-1zM3 7h1v1h-1zM5 7h1v1h-1zM7 7h1v1h-1zM9 7h1v1h-1zM11 7h1v1h-1zM2 8h1v1h-1zM4 8h1v1h-1zM6 8h1v1h-1zM8 8h1v1h-1zM10 8h1v1h-1zM12 8h1v1h-1zM3 9h1v1h-1zM5 9h1v1h-1zM7 9h1v1h-1zM9 9h1v1h-1zM11 9h1v1h-1zM2 10h1v1h-1zM4 10h1v1h-1zM6 10h1v1h-1zM8 10h1v1h-1zM10 10h1v1h-1zM12 10h1v1h-1z"/><path fill="#c0c0c0" d="M3 1h1v1h-1zM5 1h1v1h-1zM1 2h1v1h-1zM3 2h1v1h-1zM5 2h1v1h-1zM7 2h1v1h-1zM3 4h1v1h-1zM5 4h1v1h-1zM7 4h1v1h-1zM9 4h1v1h-1zM11 4h1v1h-1zM2 5h1v1h-1zM4 5h1v1h-1zM6 5h1v1h-1zM8 5h1v1h-1zM10 5h1v1h-1zM12 5h1v1h-1zM3 6h1v1h-1zM5 6h1v1h-1zM7 6h1v1h-1zM9 6h1v1h-1zM11 6h1v1h-1zM2 7h1v1h-1zM4 7h1v1h-1zM6 7h1v1h-1zM8 7h1v1h-1zM10 7h1v1h-1zM12 7h1v1h-1zM3 8h1v1h-1zM5 8h1v1h-1zM7 8h1v1h-1zM9 8h1v1h-1zM11 8h1v1h-1zM2 9h1v1h-1zM4 9h1v1h-1zM6 9h1v1h-1zM8 9h1v1h-1zM10 9h1v1h-1zM12 9h1v1h-1zM3 10h1v1h-1zM5 10h1v1h-1zM7 10h1v1h-1zM9 10h1v1h-1zM11 10h1v1h-1z"/><path fill="#fff" d="M1 3h12v1h-12zM1 4h1v1h-1zM1 5h1v1h-1zM1 6h1v1h-1zM1 7h1v1h-1zM1 8h1v1h-1zM1 9h1v1h-1zM1 10h1v1h-1z"/><path fill="#000" d="M14 3h1v1h-1zM14 4h1v1h-1zM14 5h1v1h-1zM14 6h1v1h-1zM14 7h1v1h-1zM14 8h1v1h-1zM14 9h1v1h-1zM14 10h1v1h-1zM14 11h1v1h-1zM1 12h14v1h-14z"/></svg><span class="t" style="left:39.2px;top:49.50px;font:11px 'Liberation Sans',sans-serif;line-height:13px;color:#000;transform:scaleX(0.9406);transform-origin:0 0;">Fields</span><div style="left:8px;top:72px;width:11px;height:1px;background:repeating-linear-gradient(to right,#808080 0 1px,transparent 1px 2px);"></div><div style="left:4px;top:68px;width:9px;height:9px;background:#fff;box-shadow:inset 0 0 0 1px #808080;"></div><div style="left:6px;top:72px;width:5px;height:1px;background:#000;"></div><div style="left:8px;top:70px;width:1px;height:5px;background:#000;"></div><svg style="left:19px;top:66px" width="15" height="13" viewBox="0 0 15 13" shape-rendering="crispEdges"><path fill="#808080" d="M2 0h5v1h-5zM1 1h1v1h-1zM7 1h1v1h-1zM0 2h1v1h-1zM8 2h6v1h-6zM0 3h1v1h-1zM13 3h1v1h-1zM0 4h1v1h-1zM13 4h1v1h-1zM0 5h1v1h-1zM13 5h1v1h-1zM0 6h1v1h-1zM13 6h1v1h-1zM0 7h1v1h-1zM13 7h1v1h-1zM0 8h1v1h-1zM13 8h1v1h-1zM0 9h1v1h-1zM13 9h1v1h-1zM0 10h1v1h-1zM13 10h1v1h-1zM0 11h14v1h-14z"/><path fill="#ffff00" d="M2 1h1v1h-1zM4 1h1v1h-1zM6 1h1v1h-1zM2 2h1v1h-1zM4 2h1v1h-1zM6 2h1v1h-1zM2 4h1v1h-1zM4 4h1v1h-1zM6 4h1v1h-1zM8 4h1v1h-1zM10 4h1v1h-1zM12 4h1v1h-1zM3 5h1v1h-1zM5 5h1v1h-1zM7 5h1v1h-1zM9 5h1v1h-1zM11 5h1v1h-1zM2 6h1v1h-1zM4 6h1v1h-1zM6 6h1v1h-1zM8 6h1v1h-1zM10 6h1v1h-1zM12 6h1v1h-1zM3 7h1v1h-1zM5 7h1v1h-1zM7 7h1v1h-1zM9 7h1v1h-1zM11 7h1v1h-1zM2 8h1v1h-1zM4 8h1v1h-1zM6 8h1v1h-1zM8 8h1v1h-1zM10 8h1v1h-1zM12 8h1v1h-1zM3 9h1v1h-1zM5 9h1v1h-1zM7 9h1v1h-1zM9 9h1v1h-1zM11 9h1v1h-1zM2 10h1v1h-1zM4 10h1v1h-1zM6 10h1v1h-1zM8 10h1v1h-1zM10 10h1v1h-1zM12 10h1v1h-1z"/><path fill="#c0c0c0" d="M3 1h1v1h-1zM5 1h1v1h-1zM1 2h1v1h-1zM3 2h1v1h-1zM5 2h1v1h-1zM7 2h1v1h-1zM3 4h1v1h-1zM5 4h1v1h-1zM7 4h1v1h-1zM9 4h1v1h-1zM11 4h1v1h-1zM2 5h1v1h-1zM4 5h1v1h-1zM6 5h1v1h-1zM8 5h1v1h-1zM10 5h1v1h-1zM12 5h1v1h-1zM3 6h1v1h-1zM5 6h1v1h-1zM7 6h1v1h-1zM9 6h1v1h-1zM11 6h1v1h-1zM2 7h1v1h-1zM4 7h1v1h-1zM6 7h1v1h-1zM8 7h1v1h-1zM10 7h1v1h-1zM12 7h1v1h-1zM3 8h1v1h-1zM5 8h1v1h-1zM7 8h1v1h-1zM9 8h1v1h-1zM11 8h1v1h-1zM2 9h1v1h-1zM4 9h1v1h-1zM6 9h1v1h-1zM8 9h1v1h-1zM10 9h1v1h-1zM12 9h1v1h-1zM3 10h1v1h-1zM5 10h1v1h-1zM7 10h1v1h-1zM9 10h1v1h-1zM11 10h1v1h-1z"/><path fill="#fff" d="M1 3h12v1h-12zM1 4h1v1h-1zM1 5h1v1h-1zM1 6h1v1h-1zM1 7h1v1h-1zM1 8h1v1h-1zM1 9h1v1h-1zM1 10h1v1h-1z"/><path fill="#000" d="M14 3h1v1h-1zM14 4h1v1h-1zM14 5h1v1h-1zM14 6h1v1h-1zM14 7h1v1h-1zM14 8h1v1h-1zM14 9h1v1h-1zM14 10h1v1h-1zM14 11h1v1h-1zM1 12h14v1h-14z"/></svg><span class="t" style="left:39.2px;top:65.50px;font:11px 'Liberation Sans',sans-serif;line-height:13px;color:#000;transform:scaleX(0.9567);transform-origin:0 0;">Menus</span><div style="left:8px;top:88px;width:11px;height:1px;background:repeating-linear-gradient(to right,#808080 0 1px,transparent 1px 2px);"></div><div style="left:4px;top:84px;width:9px;height:9px;background:#fff;box-shadow:inset 0 0 0 1px #808080;"></div><div style="left:6px;top:88px;width:5px;height:1px;background:#000;"></div><div style="left:8px;top:86px;width:1px;height:5px;background:#000;"></div><svg style="left:19px;top:82px" width="15" height="13" viewBox="0 0 15 13" shape-rendering="crispEdges"><path fill="#808080" d="M2 0h5v1h-5zM1 1h1v1h-1zM7 1h1v1h-1zM0 2h1v1h-1zM8 2h6v1h-6zM0 3h1v1h-1zM13 3h1v1h-1zM0 4h1v1h-1zM13 4h1v1h-1zM0 5h1v1h-1zM13 5h1v1h-1zM0 6h1v1h-1zM13 6h1v1h-1zM0 7h1v1h-1zM13 7h1v1h-1zM0 8h1v1h-1zM13 8h1v1h-1zM0 9h1v1h-1zM13 9h1v1h-1zM0 10h1v1h-1zM13 10h1v1h-1zM0 11h14v1h-14z"/><path fill="#ffff00" d="M2 1h1v1h-1zM4 1h1v1h-1zM6 1h1v1h-1zM2 2h1v1h-1zM4 2h1v1h-1zM6 2h1v1h-1zM2 4h1v1h-1zM4 4h1v1h-1zM6 4h1v1h-1zM8 4h1v1h-1zM10 4h1v1h-1zM12 4h1v1h-1zM3 5h1v1h-1zM5 5h1v1h-1zM7 5h1v1h-1zM9 5h1v1h-1zM11 5h1v1h-1zM2 6h1v1h-1zM4 6h1v1h-1zM6 6h1v1h-1zM8 6h1v1h-1zM10 6h1v1h-1zM12 6h1v1h-1zM3 7h1v1h-1zM5 7h1v1h-1zM7 7h1v1h-1zM9 7h1v1h-1zM11 7h1v1h-1zM2 8h1v1h-1zM4 8h1v1h-1zM6 8h1v1h-1zM8 8h1v1h-1zM10 8h1v1h-1zM12 8h1v1h-1zM3 9h1v1h-1zM5 9h1v1h-1zM7 9h1v1h-1zM9 9h1v1h-1zM11 9h1v1h-1zM2 10h1v1h-1zM4 10h1v1h-1zM6 10h1v1h-1zM8 10h1v1h-1zM10 10h1v1h-1zM12 10h1v1h-1z"/><path fill="#c0c0c0" d="M3 1h1v1h-1zM5 1h1v1h-1zM1 2h1v1h-1zM3 2h1v1h-1zM5 2h1v1h-1zM7 2h1v1h-1zM3 4h1v1h-1zM5 4h1v1h-1zM7 4h1v1h-1zM9 4h1v1h-1zM11 4h1v1h-1zM2 5h1v1h-1zM4 5h1v1h-1zM6 5h1v1h-1zM8 5h1v1h-1zM10 5h1v1h-1zM12 5h1v1h-1zM3 6h1v1h-1zM5 6h1v1h-1zM7 6h1v1h-1zM9 6h1v1h-1zM11 6h1v1h-1zM2 7h1v1h-1zM4 7h1v1h-1zM6 7h1v1h-1zM8 7h1v1h-1zM10 7h1v1h-1zM12 7h1v1h-1zM3 8h1v1h-1zM5 8h1v1h-1zM7 8h1v1h-1zM9 8h1v1h-1zM11 8h1v1h-1zM2 9h1v1h-1zM4 9h1v1h-1zM6 9h1v1h-1zM8 9h1v1h-1zM10 9h1v1h-1zM12 9h1v1h-1zM3 10h1v1h-1zM5 10h1v1h-1zM7 10h1v1h-1zM9 10h1v1h-1zM11 10h1v1h-1z"/><path fill="#fff" d="M1 3h12v1h-12zM1 4h1v1h-1zM1 5h1v1h-1zM1 6h1v1h-1zM1 7h1v1h-1zM1 8h1v1h-1zM1 9h1v1h-1zM1 10h1v1h-1z"/><path fill="#000" d="M14 3h1v1h-1zM14 4h1v1h-1zM14 5h1v1h-1zM14 6h1v1h-1zM14 7h1v1h-1zM14 8h1v1h-1zM14 9h1v1h-1zM14 10h1v1h-1zM14 11h1v1h-1zM1 12h14v1h-14z"/></svg><span class="t" style="left:39.2px;top:81.50px;font:11px 'Liberation Sans',sans-serif;line-height:13px;color:#000;transform:scaleX(0.9486);transform-origin:0 0;">Pages</span><div style="left:8px;top:104px;width:11px;height:1px;background:repeating-linear-gradient(to right,#808080 0 1px,transparent 1px 2px);"></div><div style="left:4px;top:100px;width:9px;height:9px;background:#fff;box-shadow:inset 0 0 0 1px #808080;"></div><div style="left:6px;top:104px;width:5px;height:1px;background:#000;"></div><svg style="left:19px;top:98px" width="16" height="13" viewBox="0 0 16 13" shape-rendering="crispEdges"><path fill="#808080" d="M2 0h5v1h-5zM1 1h1v1h-1zM7 1h1v1h-1zM1 2h1v1h-1zM8 2h6v1h-6zM1 3h1v1h-1zM13 3h1v1h-1zM1 4h1v1h-1zM13 4h1v1h-1zM0 5h12v1h-12zM13 5h1v1h-1zM0 6h1v1h-1zM13 6h1v1h-1zM1 7h1v1h-1zM1 8h1v1h-1zM2 9h1v1h-1zM2 10h1v1h-1zM3 11h10v1h-10z"/><path fill="#ffff00" d="M2 1h1v1h-1zM4 1h1v1h-1zM6 1h1v1h-1zM3 2h1v1h-1zM5 2h1v1h-1zM7 2h1v1h-1zM4 4h1v1h-1zM6 4h1v1h-1zM8 4h1v1h-1zM10 4h1v1h-1zM12 4h1v1h-1zM3 7h1v1h-1zM5 7h1v1h-1zM7 7h1v1h-1zM9 7h1v1h-1zM11 7h1v1h-1zM4 8h1v1h-1zM6 8h1v1h-1zM8 8h1v1h-1zM10 8h1v1h-1zM12 8h1v1h-1zM5 9h1v1h-1zM7 9h1v1h-1zM9 9h1v1h-1zM11 9h1v1h-1zM4 10h1v1h-1zM6 10h1v1h-1zM8 10h1v1h-1zM10 10h1v1h-1zM12 10h1v1h-1z"/><path fill="#c0c0c0" d="M3 1h1v1h-1zM5 1h1v1h-1zM2 2h1v1h-1zM4 2h1v1h-1zM6 2h1v1h-1zM3 4h1v1h-1zM5 4h1v1h-1zM7 4h1v1h-1zM9 4h1v1h-1zM11 4h1v1h-1zM4 7h1v1h-1zM6 7h1v1h-1zM8 7h1v1h-1zM10 7h1v1h-1zM12 7h1v1h-1zM3 8h1v1h-1zM5 8h1v1h-1zM7 8h1v1h-1zM9 8h1v1h-1zM11 8h1v1h-1zM4 9h1v1h-1zM6 9h1v1h-1zM8 9h1v1h-1zM10 9h1v1h-1zM12 9h1v1h-1zM5 10h1v1h-1zM7 10h1v1h-1zM9 10h1v1h-1zM11 10h1v1h-1z"/><path fill="#fff" d="M2 3h11v1h-11zM2 4h1v1h-1zM12 5h1v1h-1zM1 6h11v1h-11zM2 7h1v1h-1zM2 8h1v1h-1zM3 9h1v1h-1zM3 10h1v1h-1z"/><path fill="#000" d="M14 3h1v1h-1zM14 4h1v1h-1zM14 5h1v1h-1zM12 6h1v1h-1zM14 6h1v1h-1zM13 7h3v1h-3zM13 8h3v1h-3zM13 9h3v1h-3zM13 10h3v1h-3zM13 11h3v1h-3zM4 12h11v1h-11z"/></svg><span class="t" style="left:39.2px;top:97.50px;font:11px 'Liberation Sans',sans-serif;line-height:13px;color:#000;transform:scaleX(0.9666);transform-origin:0 0;">Records</span><div style="left:27px;top:120px;width:11px;height:1px;background:repeating-linear-gradient(to right,#808080 0 1px,transparent 1px 2px);"></div><div style="left:23px;top:116px;width:9px;height:9px;background:#fff;box-shadow:inset 0 0 0 1px #808080;"></div><div style="left:25px;top:120px;width:5px;height:1px;background:#000;"></div><div style="left:27px;top:118px;width:1px;height:5px;background:#000;"></div><svg style="left:39px;top:112px" width="15" height="15" viewBox="0 0 15 15" shape-rendering="crispEdges"><path fill="#000" d="M4 0h7v1h-7zM2 1h2v1h-2zM11 1h2v1h-2zM1 2h1v1h-1zM13 2h1v1h-1zM0 3h1v1h-1zM14 3h1v1h-1zM0 4h1v1h-1zM14 4h1v1h-1zM0 5h1v1h-1zM14 5h1v1h-1zM0 6h2v1h-2zM13 6h2v1h-2zM0 7h1v1h-1zM2 7h2v1h-2zM11 7h2v1h-2zM14 7h1v1h-1zM0 8h1v1h-1zM4 8h2v1h-2zM7 8h1v1h-1zM9 8h2v1h-2zM14 8h1v1h-1zM0 9h2v1h-2zM13 9h2v1h-2zM0 10h1v1h-1zM2 10h2v1h-2zM11 10h2v1h-2zM14 10h1v1h-1zM0 11h1v1h-1zM4 11h2v1h-2zM7 11h1v1h-1zM9 11h2v1h-2zM14 11h1v1h-1zM1 12h2v1h-2zM12 12h2v1h-2zM3 13h2v1h-2zM10 13h2v1h-2zM4 14h7v1h-7z"/><path fill="#fff" d="M4 1h1v1h-1zM6 1h1v1h-1zM8 1h1v1h-1zM10 1h1v1h-1zM3 2h1v1h-1zM5 2h1v1h-1zM7 2h1v1h-1zM9 2h1v1h-1zM11 2h1v1h-1zM2 3h1v1h-1zM4 3h1v1h-1zM6 3h1v1h-1zM8 3h1v1h-1zM10 3h1v1h-1zM12 3h1v1h-1zM1 4h1v1h-1zM3 4h1v1h-1zM5 4h1v1h-1zM7 4h1v1h-1zM9 4h1v1h-1zM11 4h1v1h-1zM13 4h1v1h-1zM2 5h1v1h-1zM4 5h1v1h-1zM6 5h1v1h-1zM8 5h1v1h-1zM10 5h1v1h-1zM12 5h1v1h-1zM3 6h1v1h-1zM5 6h1v1h-1zM7 6h1v1h-1zM9 6h1v1h-1zM11 6h1v1h-1zM4 7h1v1h-1zM6 7h1v1h-1zM8 7h1v1h-1zM10 7h1v1h-1zM4 9h1v1h-1zM6 9h1v1h-1zM8 9h1v1h-1zM10 9h1v1h-1zM5 10h1v1h-1zM7 10h1v1h-1zM9 10h1v1h-1zM6 11h1v1h-1zM8 11h1v1h-1zM5 12h1v1h-1zM7 12h1v1h-1zM9 12h1v1h-1zM6 13h1v1h-1zM8 13h1v1h-1z"/><path fill="#00ffff" d="M5 1h1v1h-1zM7 1h1v1h-1zM9 1h1v1h-1zM2 2h1v1h-1zM4 2h1v1h-1zM6 2h1v1h-1zM8 2h1v1h-1zM10 2h1v1h-1zM12 2h1v1h-1zM1 3h1v1h-1zM3 3h1v1h-1zM5 3h1v1h-1zM7 3h1v1h-1zM9 3h1v1h-1zM11 3h1v1h-1zM13 3h1v1h-1zM2 4h1v1h-1zM4 4h1v1h-1zM6 4h1v1h-1zM8 4h1v1h-1zM10 4h1v1h-1zM12 4h1v1h-1zM1 5h1v1h-1zM3 5h1v1h-1zM5 5h1v1h-1zM7 5h1v1h-1zM9 5h1v1h-1zM11 5h1v1h-1zM13 5h1v1h-1zM2 6h1v1h-1zM4 6h1v1h-1zM6 6h1v1h-1zM8 6h1v1h-1zM10 6h1v1h-1zM12 6h1v1h-1zM1 7h1v1h-1zM5 7h1v1h-1zM7 7h1v1h-1zM9 7h1v1h-1zM13 7h1v1h-1zM1 8h3v1h-3zM6 8h1v1h-1zM8 8h1v1h-1zM11 8h3v1h-3zM2 9h2v1h-2zM5 9h1v1h-1zM7 9h1v1h-1zM9 9h1v1h-1zM11 9h2v1h-2zM1 10h1v1h-1zM4 10h1v1h-1zM6 10h1v1h-1zM8 10h1v1h-1zM10 10h1v1h-1zM13 10h1v1h-1zM1 11h3v1h-3zM11 11h3v1h-3zM3 12h2v1h-2zM6 12h1v1h-1zM8 12h1v1h-1zM10 12h2v1h-2zM5 13h1v1h-1zM7 13h1v1h-1zM9 13h1v1h-1z"/></svg><span class="t" style="left:58.2px;top:113.50px;font:11px 'Liberation Sans',sans-serif;line-height:13px;color:#000;transform:scaleX(0.8915);transform-origin:0 0;">DIRXML_DERIVED</span><div style="left:27px;top:136px;width:11px;height:1px;background:repeating-linear-gradient(to right,#808080 0 1px,transparent 1px 2px);"></div><div style="left:23px;top:132px;width:9px;height:9px;background:#fff;box-shadow:inset 0 0 0 1px #808080;"></div><div style="left:25px;top:136px;width:5px;height:1px;background:#000;"></div><div style="left:27px;top:134px;width:1px;height:5px;background:#000;"></div><svg style="left:39px;top:128px" width="15" height="15" viewBox="0 0 15 15" shape-rendering="crispEdges"><path fill="#000" d="M4 0h7v1h-7zM2 1h2v1h-2zM11 1h2v1h-2zM1 2h1v1h-1zM13 2h1v1h-1zM0 3h1v1h-1zM14 3h1v1h-1zM0 4h1v1h-1zM14 4h1v1h-1zM0 5h1v1h-1zM14 5h1v1h-1zM0 6h2v1h-2zM13 6h2v1h-2zM0 7h1v1h-1zM2 7h2v1h-2zM11 7h2v1h-2zM14 7h1v1h-1zM0 8h1v1h-1zM4 8h2v1h-2zM7 8h1v1h-1zM9 8h2v1h-2zM14 8h1v1h-1zM0 9h2v1h-2zM13 9h2v1h-2zM0 10h1v1h-1zM2 10h2v1h-2zM11 10h2v1h-2zM14 10h1v1h-1zM0 11h1v1h-1zM4 11h2v1h-2zM7 11h1v1h-1zM9 11h2v1h-2zM14 11h1v1h-1zM1 12h2v1h-2zM12 12h2v1h-2zM3 13h2v1h-2zM10 13h2v1h-2zM4 14h7v1h-7z"/><path fill="#fff" d="M4 1h1v1h-1zM6 1h1v1h-1zM8 1h1v1h-1zM10 1h1v1h-1zM3 2h1v1h-1zM5 2h1v1h-1zM7 2h1v1h-1zM9 2h1v1h-1zM11 2h1v1h-1zM2 3h1v1h-1zM4 3h1v1h-1zM6 3h1v1h-1zM8 3h1v1h-1zM10 3h1v1h-1zM12 3h1v1h-1zM1 4h1v1h-1zM3 4h1v1h-1zM5 4h1v1h-1zM7 4h1v1h-1zM9 4h1v1h-1zM11 4h1v1h-1zM13 4h1v1h-1zM2 5h1v1h-1zM4 5h1v1h-1zM6 5h1v1h-1zM8 5h1v1h-1zM10 5h1v1h-1zM12 5h1v1h-1zM3 6h1v1h-1zM5 6h1v1h-1zM7 6h1v1h-1zM9 6h1v1h-1zM11 6h1v1h-1zM4 7h1v1h-1zM6 7h1v1h-1zM8 7h1v1h-1zM10 7h1v1h-1zM4 9h1v1h-1zM6 9h1v1h-1zM8 9h1v1h-1zM10 9h1v1h-1zM5 10h1v1h-1zM7 10h1v1h-1zM9 10h1v1h-1zM6 11h1v1h-1zM8 11h1v1h-1zM5 12h1v1h-1zM7 12h1v1h-1zM9 12h1v1h-1zM6 13h1v1h-1zM8 13h1v1h-1z"/><path fill="#00ffff" d="M5 1h1v1h-1zM7 1h1v1h-1zM9 1h1v1h-1zM2 2h1v1h-1zM4 2h1v1h-1zM6 2h1v1h-1zM8 2h1v1h-1zM10 2h1v1h-1zM12 2h1v1h-1zM1 3h1v1h-1zM3 3h1v1h-1zM5 3h1v1h-1zM7 3h1v1h-1zM9 3h1v1h-1zM11 3h1v1h-1zM13 3h1v1h-1zM2 4h1v1h-1zM4 4h1v1h-1zM6 4h1v1h-1zM8 4h1v1h-1zM10 4h1v1h-1zM12 4h1v1h-1zM1 5h1v1h-1zM3 5h1v1h-1zM5 5h1v1h-1zM7 5h1v1h-1zM9 5h1v1h-1zM11 5h1v1h-1zM13 5h1v1h-1zM2 6h1v1h-1zM4 6h1v1h-1zM6 6h1v1h-1zM8 6h1v1h-1zM10 6h1v1h-1zM12 6h1v1h-1zM1 7h1v1h-1zM5 7h1v1h-1zM7 7h1v1h-1zM9 7h1v1h-1zM13 7h1v1h-1zM1 8h3v1h-3zM6 8h1v1h-1zM8 8h1v1h-1zM11 8h3v1h-3zM2 9h2v1h-2zM5 9h1v1h-1zM7 9h1v1h-1zM9 9h1v1h-1zM11 9h2v1h-2zM1 10h1v1h-1zM4 10h1v1h-1zM6 10h1v1h-1zM8 10h1v1h-1zM10 10h1v1h-1zM13 10h1v1h-1zM1 11h3v1h-3zM11 11h3v1h-3zM3 12h2v1h-2zM6 12h1v1h-1zM8 12h1v1h-1zM10 12h2v1h-2zM5 13h1v1h-1zM7 13h1v1h-1zM9 13h1v1h-1z"/></svg><span class="t" style="left:58.2px;top:129.50px;font:11px 'Liberation Sans',sans-serif;line-height:13px;color:#000;transform:scaleX(0.8908);transform-origin:0 0;">DIRXML_S_DEPT</span><div style="left:27px;top:152px;width:11px;height:1px;background:repeating-linear-gradient(to right,#808080 0 1px,transparent 1px 2px);"></div><div style="left:23px;top:148px;width:9px;height:9px;background:#fff;box-shadow:inset 0 0 0 1px #808080;"></div><div style="left:25px;top:152px;width:5px;height:1px;background:#000;"></div><div style="left:27px;top:150px;width:1px;height:5px;background:#000;"></div><svg style="left:39px;top:144px" width="15" height="15" viewBox="0 0 15 15" shape-rendering="crispEdges"><path fill="#000" d="M4 0h7v1h-7zM2 1h2v1h-2zM11 1h2v1h-2zM1 2h1v1h-1zM13 2h1v1h-1zM0 3h1v1h-1zM14 3h1v1h-1zM0 4h1v1h-1zM14 4h1v1h-1zM0 5h1v1h-1zM14 5h1v1h-1zM0 6h2v1h-2zM13 6h2v1h-2zM0 7h1v1h-1zM2 7h2v1h-2zM11 7h2v1h-2zM14 7h1v1h-1zM0 8h1v1h-1zM4 8h2v1h-2zM7 8h1v1h-1zM9 8h2v1h-2zM14 8h1v1h-1zM0 9h2v1h-2zM13 9h2v1h-2zM0 10h1v1h-1zM2 10h2v1h-2zM11 10h2v1h-2zM14 10h1v1h-1zM0 11h1v1h-1zM4 11h2v1h-2zM7 11h1v1h-1zM9 11h2v1h-2zM14 11h1v1h-1zM1 12h2v1h-2zM12 12h2v1h-2zM3 13h2v1h-2zM10 13h2v1h-2zM4 14h7v1h-7z"/><path fill="#fff" d="M4 1h1v1h-1zM6 1h1v1h-1zM8 1h1v1h-1zM10 1h1v1h-1zM3 2h1v1h-1zM5 2h1v1h-1zM7 2h1v1h-1zM9 2h1v1h-1zM11 2h1v1h-1zM2 3h1v1h-1zM4 3h1v1h-1zM6 3h1v1h-1zM8 3h1v1h-1zM10 3h1v1h-1zM12 3h1v1h-1zM1 4h1v1h-1zM3 4h1v1h-1zM5 4h1v1h-1zM7 4h1v1h-1zM9 4h1v1h-1zM11 4h1v1h-1zM13 4h1v1h-1zM2 5h1v1h-1zM4 5h1v1h-1zM6 5h1v1h-1zM8 5h1v1h-1zM10 5h1v1h-1zM12 5h1v1h-1zM3 6h1v1h-1zM5 6h1v1h-1zM7 6h1v1h-1zM9 6h1v1h-1zM11 6h1v1h-1zM4 7h1v1h-1zM6 7h1v1h-1zM8 7h1v1h-1zM10 7h1v1h-1zM4 9h1v1h-1zM6 9h1v1h-1zM8 9h1v1h-1zM10 9h1v1h-1zM5 10h1v1h-1zM7 10h1v1h-1zM9 10h1v1h-1zM6 11h1v1h-1zM8 11h1v1h-1zM5 12h1v1h-1zM7 12h1v1h-1zM9 12h1v1h-1zM6 13h1v1h-1zM8 13h1v1h-1z"/><path fill="#00ffff" d="M5 1h1v1h-1zM7 1h1v1h-1zM9 1h1v1h-1zM2 2h1v1h-1zM4 2h1v1h-1zM6 2h1v1h-1zM8 2h1v1h-1zM10 2h1v1h-1zM12 2h1v1h-1zM1 3h1v1h-1zM3 3h1v1h-1zM5 3h1v1h-1zM7 3h1v1h-1zM9 3h1v1h-1zM11 3h1v1h-1zM13 3h1v1h-1zM2 4h1v1h-1zM4 4h1v1h-1zM6 4h1v1h-1zM8 4h1v1h-1zM10 4h1v1h-1zM12 4h1v1h-1zM1 5h1v1h-1zM3 5h1v1h-1zM5 5h1v1h-1zM7 5h1v1h-1zM9 5h1v1h-1zM11 5h1v1h-1zM13 5h1v1h-1zM2 6h1v1h-1zM4 6h1v1h-1zM6 6h1v1h-1zM8 6h1v1h-1zM10 6h1v1h-1zM12 6h1v1h-1zM1 7h1v1h-1zM5 7h1v1h-1zM7 7h1v1h-1zM9 7h1v1h-1zM13 7h1v1h-1zM1 8h3v1h-3zM6 8h1v1h-1zM8 8h1v1h-1zM11 8h3v1h-3zM2 9h2v1h-2zM5 9h1v1h-1zM7 9h1v1h-1zM9 9h1v1h-1zM11 9h2v1h-2zM1 10h1v1h-1zM4 10h1v1h-1zM6 10h1v1h-1zM8 10h1v1h-1zM10 10h1v1h-1zM13 10h1v1h-1zM1 11h3v1h-3zM11 11h3v1h-3zM3 12h2v1h-2zM6 12h1v1h-1zM8 12h1v1h-1zM10 12h2v1h-2zM5 13h1v1h-1zM7 13h1v1h-1zM9 13h1v1h-1z"/></svg><span class="t" style="left:58.2px;top:145.50px;font:11px 'Liberation Sans',sans-serif;line-height:13px;color:#000;transform:scaleX(0.8900);transform-origin:0 0;">DIRXML_S_MGRV</span><div style="left:27px;top:168px;width:11px;height:1px;background:repeating-linear-gradient(to right,#808080 0 1px,transparent 1px 2px);"></div><div style="left:23px;top:164px;width:9px;height:9px;background:#fff;box-shadow:inset 0 0 0 1px #808080;"></div><div style="left:25px;top:168px;width:5px;height:1px;background:#000;"></div><div style="left:27px;top:166px;width:1px;height:5px;background:#000;"></div><svg style="left:39px;top:160px" width="15" height="15" viewBox="0 0 15 15" shape-rendering="crispEdges"><path fill="#000" d="M4 0h7v1h-7zM2 1h2v1h-2zM11 1h2v1h-2zM1 2h1v1h-1zM13 2h1v1h-1zM0 3h1v1h-1zM14 3h1v1h-1zM0 4h1v1h-1zM14 4h1v1h-1zM0 5h1v1h-1zM14 5h1v1h-1zM0 6h2v1h-2zM13 6h2v1h-2zM0 7h1v1h-1zM2 7h2v1h-2zM11 7h2v1h-2zM14 7h1v1h-1zM0 8h1v1h-1zM4 8h2v1h-2zM7 8h1v1h-1zM9 8h2v1h-2zM14 8h1v1h-1zM0 9h2v1h-2zM13 9h2v1h-2zM0 10h1v1h-1zM2 10h2v1h-2zM11 10h2v1h-2zM14 10h1v1h-1zM0 11h1v1h-1zM4 11h2v1h-2zM7 11h1v1h-1zM9 11h2v1h-2zM14 11h1v1h-1zM1 12h2v1h-2zM12 12h2v1h-2zM3 13h2v1h-2zM10 13h2v1h-2zM4 14h7v1h-7z"/><path fill="#fff" d="M4 1h1v1h-1zM6 1h1v1h-1zM8 1h1v1h-1zM10 1h1v1h-1zM3 2h1v1h-1zM5 2h1v1h-1zM7 2h1v1h-1zM9 2h1v1h-1zM11 2h1v1h-1zM2 3h1v1h-1zM4 3h1v1h-1zM6 3h1v1h-1zM8 3h1v1h-1zM10 3h1v1h-1zM12 3h1v1h-1zM1 4h1v1h-1zM3 4h1v1h-1zM5 4h1v1h-1zM7 4h1v1h-1zM9 4h1v1h-1zM11 4h1v1h-1zM13 4h1v1h-1zM2 5h1v1h-1zM4 5h1v1h-1zM6 5h1v1h-1zM8 5h1v1h-1zM10 5h1v1h-1zM12 5h1v1h-1zM3 6h1v1h-1zM5 6h1v1h-1zM7 6h1v1h-1zM9 6h1v1h-1zM11 6h1v1h-1zM4 7h1v1h-1zM6 7h1v1h-1zM8 7h1v1h-1zM10 7h1v1h-1zM4 9h1v1h-1zM6 9h1v1h-1zM8 9h1v1h-1zM10 9h1v1h-1zM5 10h1v1h-1zM7 10h1v1h-1zM9 10h1v1h-1zM6 11h1v1h-1zM8 11h1v1h-1zM5 12h1v1h-1zM7 12h1v1h-1zM9 12h1v1h-1zM6 13h1v1h-1zM8 13h1v1h-1z"/><path fill="#00ffff" d="M5 1h1v1h-1zM7 1h1v1h-1zM9 1h1v1h-1zM2 2h1v1h-1zM4 2h1v1h-1zM6 2h1v1h-1zM8 2h1v1h-1zM10 2h1v1h-1zM12 2h1v1h-1zM1 3h1v1h-1zM3 3h1v1h-1zM5 3h1v1h-1zM7 3h1v1h-1zM9 3h1v1h-1zM11 3h1v1h-1zM13 3h1v1h-1zM2 4h1v1h-1zM4 4h1v1h-1zM6 4h1v1h-1zM8 4h1v1h-1zM10 4h1v1h-1zM12 4h1v1h-1zM1 5h1v1h-1zM3 5h1v1h-1zM5 5h1v1h-1zM7 5h1v1h-1zM9 5h1v1h-1zM11 5h1v1h-1zM13 5h1v1h-1zM2 6h1v1h-1zM4 6h1v1h-1zM6 6h1v1h-1zM8 6h1v1h-1zM10 6h1v1h-1zM12 6h1v1h-1zM1 7h1v1h-1zM5 7h1v1h-1zM7 7h1v1h-1zM9 7h1v1h-1zM13 7h1v1h-1zM1 8h3v1h-3zM6 8h1v1h-1zM8 8h1v1h-1zM11 8h3v1h-3zM2 9h2v1h-2zM5 9h1v1h-1zM7 9h1v1h-1zM9 9h1v1h-1zM11 9h2v1h-2zM1 10h1v1h-1zM4 10h1v1h-1zM6 10h1v1h-1zM8 10h1v1h-1zM10 10h1v1h-1zM13 10h1v1h-1zM1 11h3v1h-3zM11 11h3v1h-3zM3 12h2v1h-2zM6 12h1v1h-1zM8 12h1v1h-1zM10 12h2v1h-2zM5 13h1v1h-1zM7 13h1v1h-1zM9 13h1v1h-1z"/></svg><span class="t" style="left:58.2px;top:161.50px;font:11px 'Liberation Sans',sans-serif;line-height:13px;color:#000;transform:scaleX(0.8848);transform-origin:0 0;">DIRXML_S_PERS</span><div style="left:27px;top:184px;width:11px;height:1px;background:repeating-linear-gradient(to right,#808080 0 1px,transparent 1px 2px);"></div><div style="left:23px;top:180px;width:9px;height:9px;background:#fff;box-shadow:inset 0 0 0 1px #808080;"></div><div style="left:25px;top:184px;width:5px;height:1px;background:#000;"></div><div style="left:27px;top:182px;width:1px;height:5px;background:#000;"></div><svg style="left:39px;top:176px" width="15" height="15" viewBox="0 0 15 15" shape-rendering="crispEdges"><path fill="#000" d="M4 0h7v1h-7zM2 1h2v1h-2zM11 1h2v1h-2zM1 2h1v1h-1zM13 2h1v1h-1zM0 3h1v1h-1zM14 3h1v1h-1zM0 4h1v1h-1zM14 4h1v1h-1zM0 5h1v1h-1zM14 5h1v1h-1zM0 6h2v1h-2zM13 6h2v1h-2zM0 7h1v1h-1zM2 7h2v1h-2zM11 7h2v1h-2zM14 7h1v1h-1zM0 8h1v1h-1zM4 8h2v1h-2zM7 8h1v1h-1zM9 8h2v1h-2zM14 8h1v1h-1zM0 9h2v1h-2zM13 9h2v1h-2zM0 10h1v1h-1zM2 10h2v1h-2zM11 10h2v1h-2zM14 10h1v1h-1zM0 11h1v1h-1zM4 11h2v1h-2zM7 11h1v1h-1zM9 11h2v1h-2zM14 11h1v1h-1zM1 12h2v1h-2zM12 12h2v1h-2zM3 13h2v1h-2zM10 13h2v1h-2zM4 14h7v1h-7z"/><path fill="#fff" d="M4 1h1v1h-1zM6 1h1v1h-1zM8 1h1v1h-1zM10 1h1v1h-1zM3 2h1v1h-1zM5 2h1v1h-1zM7 2h1v1h-1zM9 2h1v1h-1zM11 2h1v1h-1zM2 3h1v1h-1zM4 3h1v1h-1zM6 3h1v1h-1zM8 3h1v1h-1zM10 3h1v1h-1zM12 3h1v1h-1zM1 4h1v1h-1zM3 4h1v1h-1zM5 4h1v1h-1zM7 4h1v1h-1zM9 4h1v1h-1zM11 4h1v1h-1zM13 4h1v1h-1zM2 5h1v1h-1zM4 5h1v1h-1zM6 5h1v1h-1zM8 5h1v1h-1zM10 5h1v1h-1zM12 5h1v1h-1zM3 6h1v1h-1zM5 6h1v1h-1zM7 6h1v1h-1zM9 6h1v1h-1zM11 6h1v1h-1zM4 7h1v1h-1zM6 7h1v1h-1zM8 7h1v1h-1zM10 7h1v1h-1zM4 9h1v1h-1zM6 9h1v1h-1zM8 9h1v1h-1zM10 9h1v1h-1zM5 10h1v1h-1zM7 10h1v1h-1zM9 10h1v1h-1zM6 11h1v1h-1zM8 11h1v1h-1zM5 12h1v1h-1zM7 12h1v1h-1zM9 12h1v1h-1zM6 13h1v1h-1zM8 13h1v1h-1z"/><path fill="#00ffff" d="M5 1h1v1h-1zM7 1h1v1h-1zM9 1h1v1h-1zM2 2h1v1h-1zM4 2h1v1h-1zM6 2h1v1h-1zM8 2h1v1h-1zM10 2h1v1h-1zM12 2h1v1h-1zM1 3h1v1h-1zM3 3h1v1h-1zM5 3h1v1h-1zM7 3h1v1h-1zM9 3h1v1h-1zM11 3h1v1h-1zM13 3h1v1h-1zM2 4h1v1h-1zM4 4h1v1h-1zM6 4h1v1h-1zM8 4h1v1h-1zM10 4h1v1h-1zM12 4h1v1h-1zM1 5h1v1h-1zM3 5h1v1h-1zM5 5h1v1h-1zM7 5h1v1h-1zM9 5h1v1h-1zM11 5h1v1h-1zM13 5h1v1h-1zM2 6h1v1h-1zM4 6h1v1h-1zM6 6h1v1h-1zM8 6h1v1h-1zM10 6h1v1h-1zM12 6h1v1h-1zM1 7h1v1h-1zM5 7h1v1h-1zM7 7h1v1h-1zM9 7h1v1h-1zM13 7h1v1h-1zM1 8h3v1h-3zM6 8h1v1h-1zM8 8h1v1h-1zM11 8h3v1h-3zM2 9h2v1h-2zM5 9h1v1h-1zM7 9h1v1h-1zM9 9h1v1h-1zM11 9h2v1h-2zM1 10h1v1h-1zM4 10h1v1h-1zM6 10h1v1h-1zM8 10h1v1h-1zM10 10h1v1h-1zM13 10h1v1h-1zM1 11h3v1h-3zM11 11h3v1h-3zM3 12h2v1h-2zM6 12h1v1h-1zM8 12h1v1h-1zM10 12h2v1h-2zM5 13h1v1h-1zM7 13h1v1h-1zM9 13h1v1h-1z"/></svg><span class="t" style="left:58.2px;top:177.50px;font:11px 'Liberation Sans',sans-serif;line-height:13px;color:#000;transform:scaleX(0.8797);transform-origin:0 0;">DIRXML_S_PERSV</span><div style="left:27px;top:200px;width:11px;height:1px;background:repeating-linear-gradient(to right,#808080 0 1px,transparent 1px 2px);"></div><div style="left:23px;top:196px;width:9px;height:9px;background:#fff;box-shadow:inset 0 0 0 1px #808080;"></div><div style="left:25px;top:200px;width:5px;height:1px;background:#000;"></div><div style="left:27px;top:198px;width:1px;height:5px;background:#000;"></div><svg style="left:39px;top:192px" width="15" height="15" viewBox="0 0 15 15" shape-rendering="crispEdges"><path fill="#000" d="M4 0h7v1h-7zM2 1h2v1h-2zM11 1h2v1h-2zM1 2h1v1h-1zM13 2h1v1h-1zM0 3h1v1h-1zM14 3h1v1h-1zM0 4h1v1h-1zM14 4h1v1h-1zM0 5h1v1h-1zM14 5h1v1h-1zM0 6h2v1h-2zM13 6h2v1h-2zM0 7h1v1h-1zM2 7h2v1h-2zM11 7h2v1h-2zM14 7h1v1h-1zM0 8h1v1h-1zM4 8h2v1h-2zM7 8h1v1h-1zM9 8h2v1h-2zM14 8h1v1h-1zM0 9h2v1h-2zM13 9h2v1h-2zM0 10h1v1h-1zM2 10h2v1h-2zM11 10h2v1h-2zM14 10h1v1h-1zM0 11h1v1h-1zM4 11h2v1h-2zM7 11h1v1h-1zM9 11h2v1h-2zM14 11h1v1h-1zM1 12h2v1h-2zM12 12h2v1h-2zM3 13h2v1h-2zM10 13h2v1h-2zM4 14h7v1h-7z"/><path fill="#fff" d="M4 1h1v1h-1zM6 1h1v1h-1zM8 1h1v1h-1zM10 1h1v1h-1zM3 2h1v1h-1zM5 2h1v1h-1zM7 2h1v1h-1zM9 2h1v1h-1zM11 2h1v1h-1zM2 3h1v1h-1zM4 3h1v1h-1zM6 3h1v1h-1zM8 3h1v1h-1zM10 3h1v1h-1zM12 3h1v1h-1zM1 4h1v1h-1zM3 4h1v1h-1zM5 4h1v1h-1zM7 4h1v1h-1zM9 4h1v1h-1zM11 4h1v1h-1zM13 4h1v1h-1zM2 5h1v1h-1zM4 5h1v1h-1zM6 5h1v1h-1zM8 5h1v1h-1zM10 5h1v1h-1zM12 5h1v1h-1zM3 6h1v1h-1zM5 6h1v1h-1zM7 6h1v1h-1zM9 6h1v1h-1zM11 6h1v1h-1zM4 7h1v1h-1zM6 7h1v1h-1zM8 7h1v1h-1zM10 7h1v1h-1zM4 9h1v1h-1zM6 9h1v1h-1zM8 9h1v1h-1zM10 9h1v1h-1zM5 10h1v1h-1zM7 10h1v1h-1zM9 10h1v1h-1zM6 11h1v1h-1zM8 11h1v1h-1zM5 12h1v1h-1zM7 12h1v1h-1zM9 12h1v1h-1zM6 13h1v1h-1zM8 13h1v1h-1z"/><path fill="#00ffff" d="M5 1h1v1h-1zM7 1h1v1h-1zM9 1h1v1h-1zM2 2h1v1h-1zM4 2h1v1h-1zM6 2h1v1h-1zM8 2h1v1h-1zM10 2h1v1h-1zM12 2h1v1h-1zM1 3h1v1h-1zM3 3h1v1h-1zM5 3h1v1h-1zM7 3h1v1h-1zM9 3h1v1h-1zM11 3h1v1h-1zM13 3h1v1h-1zM2 4h1v1h-1zM4 4h1v1h-1zM6 4h1v1h-1zM8 4h1v1h-1zM10 4h1v1h-1zM12 4h1v1h-1zM1 5h1v1h-1zM3 5h1v1h-1zM5 5h1v1h-1zM7 5h1v1h-1zM9 5h1v1h-1zM11 5h1v1h-1zM13 5h1v1h-1zM2 6h1v1h-1zM4 6h1v1h-1zM6 6h1v1h-1zM8 6h1v1h-1zM10 6h1v1h-1zM12 6h1v1h-1zM1 7h1v1h-1zM5 7h1v1h-1zM7 7h1v1h-1zM9 7h1v1h-1zM13 7h1v1h-1zM1 8h3v1h-3zM6 8h1v1h-1zM8 8h1v1h-1zM11 8h3v1h-3zM2 9h2v1h-2zM5 9h1v1h-1zM7 9h1v1h-1zM9 9h1v1h-1zM11 9h2v1h-2zM1 10h1v1h-1zM4 10h1v1h-1zM6 10h1v1h-1zM8 10h1v1h-1zM10 10h1v1h-1zM13 10h1v1h-1zM1 11h3v1h-3zM11 11h3v1h-3zM3 12h2v1h-2zM6 12h1v1h-1zM8 12h1v1h-1zM10 12h2v1h-2zM5 13h1v1h-1zM7 13h1v1h-1zM9 13h1v1h-1z"/></svg><span class="t" style="left:58.2px;top:193.50px;font:11px 'Liberation Sans',sans-serif;line-height:13px;color:#000;transform:scaleX(0.8885);transform-origin:0 0;">DIRXML_S_PHONES</span><div style="left:27px;top:216px;width:11px;height:1px;background:repeating-linear-gradient(to right,#808080 0 1px,transparent 1px 2px);"></div><div style="left:23px;top:212px;width:9px;height:9px;background:#fff;box-shadow:inset 0 0 0 1px #808080;"></div><div style="left:25px;top:216px;width:5px;height:1px;background:#000;"></div><div style="left:27px;top:214px;width:1px;height:5px;background:#000;"></div><svg style="left:39px;top:208px" width="15" height="15" viewBox="0 0 15 15" shape-rendering="crispEdges"><path fill="#000" d="M4 0h7v1h-7zM2 1h2v1h-2zM11 1h2v1h-2zM1 2h1v1h-1zM13 2h1v1h-1zM0 3h1v1h-1zM14 3h1v1h-1zM0 4h1v1h-1zM14 4h1v1h-1zM0 5h1v1h-1zM14 5h1v1h-1zM0 6h2v1h-2zM13 6h2v1h-2zM0 7h1v1h-1zM2 7h2v1h-2zM11 7h2v1h-2zM14 7h1v1h-1zM0 8h1v1h-1zM4 8h2v1h-2zM7 8h1v1h-1zM9 8h2v1h-2zM14 8h1v1h-1zM0 9h2v1h-2zM13 9h2v1h-2zM0 10h1v1h-1zM2 10h2v1h-2zM11 10h2v1h-2zM14 10h1v1h-1zM0 11h1v1h-1zM4 11h2v1h-2zM7 11h1v1h-1zM9 11h2v1h-2zM14 11h1v1h-1zM1 12h2v1h-2zM12 12h2v1h-2zM3 13h2v1h-2zM10 13h2v1h-2zM4 14h7v1h-7z"/><path fill="#fff" d="M4 1h1v1h-1zM6 1h1v1h-1zM8 1h1v1h-1zM10 1h1v1h-1zM3 2h1v1h-1zM5 2h1v1h-1zM7 2h1v1h-1zM9 2h1v1h-1zM11 2h1v1h-1zM2 3h1v1h-1zM4 3h1v1h-1zM6 3h1v1h-1zM8 3h1v1h-1zM10 3h1v1h-1zM12 3h1v1h-1zM1 4h1v1h-1zM3 4h1v1h-1zM5 4h1v1h-1zM7 4h1v1h-1zM9 4h1v1h-1zM11 4h1v1h-1zM13 4h1v1h-1zM2 5h1v1h-1zM4 5h1v1h-1zM6 5h1v1h-1zM8 5h1v1h-1zM10 5h1v1h-1zM12 5h1v1h-1zM3 6h1v1h-1zM5 6h1v1h-1zM7 6h1v1h-1zM9 6h1v1h-1zM11 6h1v1h-1zM4 7h1v1h-1zM6 7h1v1h-1zM8 7h1v1h-1zM10 7h1v1h-1zM4 9h1v1h-1zM6 9h1v1h-1zM8 9h1v1h-1zM10 9h1v1h-1zM5 10h1v1h-1zM7 10h1v1h-1zM9 10h1v1h-1zM6 11h1v1h-1zM8 11h1v1h-1zM5 12h1v1h-1zM7 12h1v1h-1zM9 12h1v1h-1zM6 13h1v1h-1zM8 13h1v1h-1z"/><path fill="#00ffff" d="M5 1h1v1h-1zM7 1h1v1h-1zM9 1h1v1h-1zM2 2h1v1h-1zM4 2h1v1h-1zM6 2h1v1h-1zM8 2h1v1h-1zM10 2h1v1h-1zM12 2h1v1h-1zM1 3h1v1h-1zM3 3h1v1h-1zM5 3h1v1h-1zM7 3h1v1h-1zM9 3h1v1h-1zM11 3h1v1h-1zM13 3h1v1h-1zM2 4h1v1h-1zM4 4h1v1h-1zM6 4h1v1h-1zM8 4h1v1h-1zM10 4h1v1h-1zM12 4h1v1h-1zM1 5h1v1h-1zM3 5h1v1h-1zM5 5h1v1h-1zM7 5h1v1h-1zM9 5h1v1h-1zM11 5h1v1h-1zM13 5h1v1h-1zM2 6h1v1h-1zM4 6h1v1h-1zM6 6h1v1h-1zM8 6h1v1h-1zM10 6h1v1h-1zM12 6h1v1h-1zM1 7h1v1h-1zM5 7h1v1h-1zM7 7h1v1h-1zM9 7h1v1h-1zM13 7h1v1h-1zM1 8h3v1h-3zM6 8h1v1h-1zM8 8h1v1h-1zM11 8h3v1h-3zM2 9h2v1h-2zM5 9h1v1h-1zM7 9h1v1h-1zM9 9h1v1h-1zM11 9h2v1h-2zM1 10h1v1h-1zM4 10h1v1h-1zM6 10h1v1h-1zM8 10h1v1h-1zM10 10h1v1h-1zM13 10h1v1h-1zM1 11h3v1h-3zM11 11h3v1h-3zM3 12h2v1h-2zM6 12h1v1h-1zM8 12h1v1h-1zM10 12h2v1h-2zM5 13h1v1h-1zM7 13h1v1h-1zM9 13h1v1h-1z"/></svg><span class="t" style="left:58.2px;top:209.50px;font:11px 'Liberation Sans',sans-serif;line-height:13px;color:#000;transform:scaleX(0.8984);transform-origin:0 0;">DIRXML_STAGE01</span><div style="left:27px;top:232px;width:11px;height:1px;background:repeating-linear-gradient(to right,#808080 0 1px,transparent 1px 2px);"></div><div style="left:23px;top:228px;width:9px;height:9px;background:#fff;box-shadow:inset 0 0 0 1px #808080;"></div><div style="left:25px;top:232px;width:5px;height:1px;background:#000;"></div><div style="left:27px;top:230px;width:1px;height:5px;background:#000;"></div><svg style="left:39px;top:224px" width="15" height="15" viewBox="0 0 15 15" shape-rendering="crispEdges"><path fill="#000" d="M4 0h7v1h-7zM2 1h2v1h-2zM11 1h2v1h-2zM1 2h1v1h-1zM13 2h1v1h-1zM0 3h1v1h-1zM14 3h1v1h-1zM0 4h1v1h-1zM14 4h1v1h-1zM0 5h1v1h-1zM14 5h1v1h-1zM0 6h2v1h-2zM13 6h2v1h-2zM0 7h1v1h-1zM2 7h2v1h-2zM11 7h2v1h-2zM14 7h1v1h-1zM0 8h1v1h-1zM4 8h2v1h-2zM7 8h1v1h-1zM9 8h2v1h-2zM14 8h1v1h-1zM0 9h2v1h-2zM13 9h2v1h-2zM0 10h1v1h-1zM2 10h2v1h-2zM11 10h2v1h-2zM14 10h1v1h-1zM0 11h1v1h-1zM4 11h2v1h-2zM7 11h1v1h-1zM9 11h2v1h-2zM14 11h1v1h-1zM1 12h2v1h-2zM12 12h2v1h-2zM3 13h2v1h-2zM10 13h2v1h-2zM4 14h7v1h-7z"/><path fill="#fff" d="M4 1h1v1h-1zM6 1h1v1h-1zM8 1h1v1h-1zM10 1h1v1h-1zM3 2h1v1h-1zM5 2h1v1h-1zM7 2h1v1h-1zM9 2h1v1h-1zM11 2h1v1h-1zM2 3h1v1h-1zM4 3h1v1h-1zM6 3h1v1h-1zM8 3h1v1h-1zM10 3h1v1h-1zM12 3h1v1h-1zM1 4h1v1h-1zM3 4h1v1h-1zM5 4h1v1h-1zM7 4h1v1h-1zM9 4h1v1h-1zM11 4h1v1h-1zM13 4h1v1h-1zM2 5h1v1h-1zM4 5h1v1h-1zM6 5h1v1h-1zM8 5h1v1h-1zM10 5h1v1h-1zM12 5h1v1h-1zM3 6h1v1h-1zM5 6h1v1h-1zM7 6h1v1h-1zM9 6h1v1h-1zM11 6h1v1h-1zM4 7h1v1h-1zM6 7h1v1h-1zM8 7h1v1h-1zM10 7h1v1h-1zM4 9h1v1h-1zM6 9h1v1h-1zM8 9h1v1h-1zM10 9h1v1h-1zM5 10h1v1h-1zM7 10h1v1h-1zM9 10h1v1h-1zM6 11h1v1h-1zM8 11h1v1h-1zM5 12h1v1h-1zM7 12h1v1h-1zM9 12h1v1h-1zM6 13h1v1h-1zM8 13h1v1h-1z"/><path fill="#00ffff" d="M5 1h1v1h-1zM7 1h1v1h-1zM9 1h1v1h-1zM2 2h1v1h-1zM4 2h1v1h-1zM6 2h1v1h-1zM8 2h1v1h-1zM10 2h1v1h-1zM12 2h1v1h-1zM1 3h1v1h-1zM3 3h1v1h-1zM5 3h1v1h-1zM7 3h1v1h-1zM9 3h1v1h-1zM11 3h1v1h-1zM13 3h1v1h-1zM2 4h1v1h-1zM4 4h1v1h-1zM6 4h1v1h-1zM8 4h1v1h-1zM10 4h1v1h-1zM12 4h1v1h-1zM1 5h1v1h-1zM3 5h1v1h-1zM5 5h1v1h-1zM7 5h1v1h-1zM9 5h1v1h-1zM11 5h1v1h-1zM13 5h1v1h-1zM2 6h1v1h-1zM4 6h1v1h-1zM6 6h1v1h-1zM8 6h1v1h-1zM10 6h1v1h-1zM12 6h1v1h-1zM1 7h1v1h-1zM5 7h1v1h-1zM7 7h1v1h-1zM9 7h1v1h-1zM13 7h1v1h-1zM1 8h3v1h-3zM6 8h1v1h-1zM8 8h1v1h-1zM11 8h3v1h-3zM2 9h2v1h-2zM5 9h1v1h-1zM7 9h1v1h-1zM9 9h1v1h-1zM11 9h2v1h-2zM1 10h1v1h-1zM4 10h1v1h-1zM6 10h1v1h-1zM8 10h1v1h-1zM10 10h1v1h-1zM13 10h1v1h-1zM1 11h3v1h-3zM11 11h3v1h-3zM3 12h2v1h-2zM6 12h1v1h-1zM8 12h1v1h-1zM10 12h2v1h-2zM5 13h1v1h-1zM7 13h1v1h-1zM9 13h1v1h-1z"/></svg><span class="t" style="left:58.2px;top:225.50px;font:11px 'Liberation Sans',sans-serif;line-height:13px;color:#000;transform:scaleX(0.9012);transform-origin:0 0;">DIRXML_TRANS01</span><div style="left:27px;top:248px;width:11px;height:1px;background:repeating-linear-gradient(to right,#808080 0 1px,transparent 1px 2px);"></div><div style="left:23px;top:244px;width:9px;height:9px;background:#fff;box-shadow:inset 0 0 0 1px #808080;"></div><div style="left:25px;top:248px;width:5px;height:1px;background:#000;"></div><svg style="left:39px;top:240px" width="15" height="15" viewBox="0 0 15 15" shape-rendering="crispEdges"><path fill="#000" d="M4 0h7v1h-7zM2 1h2v1h-2zM11 1h2v1h-2zM1 2h1v1h-1zM13 2h1v1h-1zM0 3h1v1h-1zM14 3h1v1h-1zM0 4h1v1h-1zM14 4h1v1h-1zM0 5h1v1h-1zM14 5h1v1h-1zM0 6h2v1h-2zM13 6h2v1h-2zM0 7h1v1h-1zM2 7h2v1h-2zM11 7h2v1h-2zM14 7h1v1h-1zM0 8h1v1h-1zM4 8h2v1h-2zM7 8h1v1h-1zM9 8h2v1h-2zM14 8h1v1h-1zM0 9h2v1h-2zM13 9h2v1h-2zM0 10h1v1h-1zM2 10h2v1h-2zM11 10h2v1h-2zM14 10h1v1h-1zM0 11h1v1h-1zM4 11h2v1h-2zM7 11h1v1h-1zM9 11h2v1h-2zM14 11h1v1h-1zM1 12h2v1h-2zM12 12h2v1h-2zM3 13h2v1h-2zM10 13h2v1h-2zM4 14h7v1h-7z"/><path fill="#fff" d="M4 1h1v1h-1zM6 1h1v1h-1zM8 1h1v1h-1zM10 1h1v1h-1zM3 2h1v1h-1zM5 2h1v1h-1zM7 2h1v1h-1zM9 2h1v1h-1zM11 2h1v1h-1zM2 3h1v1h-1zM4 3h1v1h-1zM6 3h1v1h-1zM8 3h1v1h-1zM10 3h1v1h-1zM12 3h1v1h-1zM1 4h1v1h-1zM3 4h1v1h-1zM5 4h1v1h-1zM7 4h1v1h-1zM9 4h1v1h-1zM11 4h1v1h-1zM13 4h1v1h-1zM2 5h1v1h-1zM4 5h1v1h-1zM6 5h1v1h-1zM8 5h1v1h-1zM10 5h1v1h-1zM12 5h1v1h-1zM3 6h1v1h-1zM5 6h1v1h-1zM7 6h1v1h-1zM9 6h1v1h-1zM11 6h1v1h-1zM4 7h1v1h-1zM6 7h1v1h-1zM8 7h1v1h-1zM10 7h1v1h-1zM4 9h1v1h-1zM6 9h1v1h-1zM8 9h1v1h-1zM10 9h1v1h-1zM5 10h1v1h-1zM7 10h1v1h-1zM9 10h1v1h-1zM6 11h1v1h-1zM8 11h1v1h-1zM5 12h1v1h-1zM7 12h1v1h-1zM9 12h1v1h-1zM6 13h1v1h-1zM8 13h1v1h-1z"/><path fill="#00ffff" d="M5 1h1v1h-1zM7 1h1v1h-1zM9 1h1v1h-1zM2 2h1v1h-1zM4 2h1v1h-1zM6 2h1v1h-1zM8 2h1v1h-1zM10 2h1v1h-1zM12 2h1v1h-1zM1 3h1v1h-1zM3 3h1v1h-1zM5 3h1v1h-1zM7 3h1v1h-1zM9 3h1v1h-1zM11 3h1v1h-1zM13 3h1v1h-1zM2 4h1v1h-1zM4 4h1v1h-1zM6 4h1v1h-1zM8 4h1v1h-1zM10 4h1v1h-1zM12 4h1v1h-1zM1 5h1v1h-1zM3 5h1v1h-1zM5 5h1v1h-1zM7 5h1v1h-1zM9 5h1v1h-1zM11 5h1v1h-1zM13 5h1v1h-1zM2 6h1v1h-1zM4 6h1v1h-1zM6 6h1v1h-1zM8 6h1v1h-1zM10 6h1v1h-1zM12 6h1v1h-1zM1 7h1v1h-1zM5 7h1v1h-1zM7 7h1v1h-1zM9 7h1v1h-1zM13 7h1v1h-1zM1 8h3v1h-3zM6 8h1v1h-1zM8 8h1v1h-1zM11 8h3v1h-3zM2 9h2v1h-2zM5 9h1v1h-1zM7 9h1v1h-1zM9 9h1v1h-1zM11 9h2v1h-2zM1 10h1v1h-1zM4 10h1v1h-1zM6 10h1v1h-1zM8 10h1v1h-1zM10 10h1v1h-1zM13 10h1v1h-1zM1 11h3v1h-3zM11 11h3v1h-3zM3 12h2v1h-2zM6 12h1v1h-1zM8 12h1v1h-1zM10 12h2v1h-2zM5 13h1v1h-1zM7 13h1v1h-1zM9 13h1v1h-1z"/></svg><span class="t" style="left:58.2px;top:241.50px;font:11px 'Liberation Sans',sans-serif;line-height:13px;color:#000;transform:scaleX(0.9025);transform-origin:0 0;">DIRXML_TRANS01V</span><div style="left:46px;top:264px;width:11px;height:1px;background:repeating-linear-gradient(to right,#808080 0 1px,transparent 1px 2px);"></div><svg style="left:57px;top:258px" width="16" height="12" viewBox="0 0 16 12" shape-rendering="crispEdges"><path fill="#000" d="M6 0h1v1h-1zM5 1h1v1h-1zM7 1h1v1h-1zM4 2h1v1h-1zM8 2h1v1h-1zM3 3h1v1h-1zM9 3h1v1h-1zM2 4h1v1h-1zM10 4h1v1h-1zM12 4h3v1h-3zM1 5h1v1h-1zM10 5h2v1h-2zM15 5h1v1h-1zM0 6h1v1h-1zM6 6h5v1h-5zM13 6h1v1h-1zM15 6h1v1h-1zM0 7h1v1h-1zM13 7h1v1h-1zM15 7h1v1h-1zM1 8h1v1h-1zM5 8h1v1h-1zM7 8h1v1h-1zM9 8h2v1h-2zM14 8h1v1h-1zM2 9h1v1h-1zM5 9h1v1h-1zM7 9h1v1h-1zM9 9h1v1h-1zM11 9h3v1h-3zM3 10h1v1h-1zM5 10h1v1h-1zM4 11h1v1h-1z"/><path fill="#00ffff" d="M6 1h1v1h-1zM5 2h3v1h-3zM4 3h5v1h-5zM3 4h5v1h-5zM2 5h5v1h-5zM1 6h5v1h-5zM2 7h3v1h-3zM4 8h1v1h-1z"/><path fill="#0000ff" d="M8 4h2v1h-2zM7 5h3v1h-3zM1 7h1v1h-1zM2 8h2v1h-2zM3 9h2v1h-2zM4 10h1v1h-1z"/><path fill="#808000" d="M12 5h3v1h-3zM11 6h2v1h-2zM14 6h1v1h-1zM6 7h7v1h-7zM14 7h1v1h-1zM6 8h1v1h-1zM8 8h1v1h-1zM11 8h3v1h-3z"/><path fill="#fff" d="M5 7h1v1h-1z"/></svg><span class="t" style="left:77.2px;top:257.50px;font:11px 'Liberation Sans',sans-serif;line-height:13px;color:#000;transform:scaleX(0.9003);transform-origin:0 0;">DIRXML_DTTM_ST</span><div style="left:46px;top:280px;width:11px;height:1px;background:repeating-linear-gradient(to right,#808080 0 1px,transparent 1px 2px);"></div><svg style="left:57px;top:274px" width="16" height="12" viewBox="0 0 16 12" shape-rendering="crispEdges"><path fill="#000" d="M6 0h1v1h-1zM5 1h1v1h-1zM7 1h1v1h-1zM4 2h1v1h-1zM8 2h1v1h-1zM3 3h1v1h-1zM9 3h1v1h-1zM2 4h1v1h-1zM10 4h1v1h-1zM12 4h3v1h-3zM1 5h1v1h-1zM10 5h2v1h-2zM15 5h1v1h-1zM0 6h1v1h-1zM6 6h5v1h-5zM13 6h1v1h-1zM15 6h1v1h-1zM0 7h1v1h-1zM13 7h1v1h-1zM15 7h1v1h-1zM1 8h1v1h-1zM5 8h1v1h-1zM7 8h1v1h-1zM9 8h2v1h-2zM14 8h1v1h-1zM2 9h1v1h-1zM5 9h1v1h-1zM7 9h1v1h-1zM9 9h1v1h-1zM11 9h3v1h-3zM3 10h1v1h-1zM5 10h1v1h-1zM4 11h1v1h-1z"/><path fill="#00ffff" d="M6 1h1v1h-1zM5 2h3v1h-3zM4 3h5v1h-5zM3 4h5v1h-5zM2 5h5v1h-5zM1 6h5v1h-5zM2 7h3v1h-3zM4 8h1v1h-1z"/><path fill="#0000ff" d="M8 4h2v1h-2zM7 5h3v1h-3zM1 7h1v1h-1zM2 8h2v1h-2zM3 9h2v1h-2zM4 10h1v1h-1z"/><path fill="#808000" d="M12 5h3v1h-3zM11 6h2v1h-2zM14 6h1v1h-1zM6 7h7v1h-7zM14 7h1v1h-1zM6 8h1v1h-1zM8 8h1v1h-1zM11 8h3v1h-3z"/><path fill="#fff" d="M5 7h1v1h-1z"/></svg><span class="t" style="left:77.2px;top:273.50px;font:11px 'Liberation Sans',sans-serif;line-height:13px;color:#000;transform:scaleX(0.9031);transform-origin:0 0;">DIRXML_DRIVER</span><div style="left:46px;top:296px;width:11px;height:1px;background:repeating-linear-gradient(to right,#808080 0 1px,transparent 1px 2px);"></div><svg style="left:57px;top:290px" width="16" height="12" viewBox="0 0 16 12" shape-rendering="crispEdges"><path fill="#000" d="M6 0h1v1h-1zM5 1h1v1h-1zM7 1h1v1h-1zM4 2h1v1h-1zM8 2h1v1h-1zM3 3h1v1h-1zM9 3h1v1h-1zM2 4h1v1h-1zM10 4h1v1h-1zM12 4h3v1h-3zM1 5h1v1h-1zM10 5h2v1h-2zM15 5h1v1h-1zM0 6h1v1h-1zM6 6h5v1h-5zM13 6h1v1h-1zM15 6h1v1h-1zM0 7h1v1h-1zM13 7h1v1h-1zM15 7h1v1h-1zM1 8h1v1h-1zM5 8h1v1h-1zM7 8h1v1h-1zM9 8h2v1h-2zM14 8h1v1h-1zM2 9h1v1h-1zM5 9h1v1h-1zM7 9h1v1h-1zM9 9h1v1h-1zM11 9h3v1h-3zM3 10h1v1h-1zM5 10h1v1h-1zM4 11h1v1h-1z"/><path fill="#00ffff" d="M6 1h1v1h-1zM5 2h3v1h-3zM4 3h5v1h-5zM3 4h5v1h-5zM2 5h5v1h-5zM1 6h5v1h-5zM2 7h3v1h-3zM4 8h1v1h-1z"/><path fill="#0000ff" d="M8 4h2v1h-2zM7 5h3v1h-3zM1 7h1v1h-1zM2 8h2v1h-2zM3 9h2v1h-2zM4 10h1v1h-1z"/><path fill="#808000" d="M12 5h3v1h-3zM11 6h2v1h-2zM14 6h1v1h-1zM6 7h7v1h-7zM14 7h1v1h-1zM6 8h1v1h-1zM8 8h1v1h-1zM11 8h3v1h-3z"/><path fill="#fff" d="M5 7h1v1h-1z"/></svg><span class="t" style="left:77.2px;top:289.50px;font:11px 'Liberation Sans',sans-serif;line-height:13px;color:#000;transform:scaleX(0.9155);transform-origin:0 0;">DIRXML_INST</span><div style="left:46px;top:312px;width:11px;height:1px;background:repeating-linear-gradient(to right,#808080 0 1px,transparent 1px 2px);"></div><svg style="left:60px;top:306px" width="10" height="12" viewBox="0 0 10 12" shape-rendering="crispEdges"><path fill="#000" d="M6 0h1v1h-1zM5 1h1v1h-1zM7 1h1v1h-1zM4 2h1v1h-1zM8 2h1v1h-1zM3 3h1v1h-1zM8 3h2v1h-2zM2 4h1v1h-1zM7 4h1v1h-1zM9 4h1v1h-1zM1 5h1v1h-1zM6 5h1v1h-1zM9 5h1v1h-1zM0 6h1v1h-1zM5 6h1v1h-1zM8 6h1v1h-1zM0 7h2v1h-2zM4 7h1v1h-1zM7 7h1v1h-1zM0 8h1v1h-1zM2 8h2v1h-2zM6 8h1v1h-1zM1 9h1v1h-1zM5 9h1v1h-1zM2 10h1v1h-1zM4 10h1v1h-1zM3 11h1v1h-1z"/><path fill="#00ffff" d="M6 1h1v1h-1zM5 2h3v1h-3zM4 3h4v1h-4zM3 4h4v1h-4zM2 5h4v1h-4zM1 6h4v1h-4zM2 7h2v1h-2z"/><path fill="#0000ff" d="M8 4h1v1h-1zM7 5h2v1h-2zM6 6h2v1h-2zM5 7h2v1h-2zM1 8h1v1h-1zM4 8h2v1h-2zM2 9h3v1h-3zM3 10h1v1h-1z"/></svg><span class="t" style="left:77.2px;top:305.50px;font:11px 'Liberation Sans',sans-serif;line-height:13px;color:#000;transform:scaleX(0.9157);transform-origin:0 0;">DIRXML_ASSOC_ID</span><div style="left:46px;top:328px;width:11px;height:1px;background:repeating-linear-gradient(to right,#808080 0 1px,transparent 1px 2px);"></div><div style="left:42px;top:324px;width:9px;height:9px;background:#fff;box-shadow:inset 0 0 0 1px #808080;"></div><div style="left:44px;top:328px;width:5px;height:1px;background:#000;"></div><div style="left:46px;top:326px;width:1px;height:5px;background:#000;"></div><svg style="left:60px;top:322px" width="10" height="12" viewBox="0 0 10 12" shape-rendering="crispEdges"><path fill="#000" d="M6 0h1v1h-1zM5 1h1v1h-1zM7 1h1v1h-1zM4 2h1v1h-1zM8 2h1v1h-1zM3 3h1v1h-1zM8 3h2v1h-2zM2 4h1v1h-1zM7 4h1v1h-1zM9 4h1v1h-1zM1 5h1v1h-1zM6 5h1v1h-1zM9 5h1v1h-1zM0 6h1v1h-1zM5 6h1v1h-1zM8 6h1v1h-1zM0 7h2v1h-2zM4 7h1v1h-1zM7 7h1v1h-1zM0 8h1v1h-1zM2 8h2v1h-2zM6 8h1v1h-1zM1 9h1v1h-1zM5 9h1v1h-1zM2 10h1v1h-1zM4 10h1v1h-1zM3 11h1v1h-1z"/><path fill="#00ffff" d="M6 1h1v1h-1zM5 2h3v1h-3zM4 3h4v1h-4zM3 4h4v1h-4zM2 5h4v1h-4zM1 6h4v1h-4zM2 7h2v1h-2z"/><path fill="#0000ff" d="M8 4h1v1h-1zM7 5h2v1h-2zM6 6h2v1h-2zM5 7h2v1h-2zM1 8h1v1h-1zM4 8h2v1h-2zM2 9h3v1h-3zM3 10h1v1h-1z"/></svg><span class="t" style="left:77.2px;top:321.50px;font:11px 'Liberation Sans',sans-serif;line-height:13px;color:#000;transform:scaleX(0.9234);transform-origin:0 0;">DIRXML_STATUS</span><div style="left:46px;top:344px;width:11px;height:1px;background:repeating-linear-gradient(to right,#808080 0 1px,transparent 1px 2px);"></div><svg style="left:60px;top:338px" width="10" height="12" viewBox="0 0 10 12" shape-rendering="crispEdges"><path fill="#000" d="M6 0h1v1h-1zM5 1h1v1h-1zM7 1h1v1h-1zM4 2h1v1h-1zM8 2h1v1h-1zM3 3h1v1h-1zM8 3h2v1h-2zM2 4h1v1h-1zM7 4h1v1h-1zM9 4h1v1h-1zM1 5h1v1h-1zM6 5h1v1h-1zM9 5h1v1h-1zM0 6h1v1h-1zM5 6h1v1h-1zM8 6h1v1h-1zM0 7h2v1h-2zM4 7h1v1h-1zM7 7h1v1h-1zM0 8h1v1h-1zM2 8h2v1h-2zM6 8h1v1h-1zM1 9h1v1h-1zM5 9h1v1h-1zM2 10h1v1h-1zM4 10h1v1h-1zM3 11h1v1h-1z"/><path fill="#00ffff" d="M6 1h1v1h-1zM5 2h3v1h-3zM4 3h4v1h-4zM3 4h4v1h-4zM2 5h4v1h-4zM1 6h4v1h-4zM2 7h2v1h-2z"/><path fill="#0000ff" d="M8 4h1v1h-1zM7 5h2v1h-2zM6 6h2v1h-2zM5 7h2v1h-2zM1 8h1v1h-1zM4 8h2v1h-2zM2 9h3v1h-3zM3 10h1v1h-1z"/></svg><span class="t" style="left:77.2px;top:337.50px;font:11px 'Liberation Sans',sans-serif;line-height:13px;color:#000;transform:scaleX(0.8784);transform-origin:0 0;">DIRXML_EVENT</span><div style="left:46px;top:360px;width:11px;height:1px;background:repeating-linear-gradient(to right,#808080 0 1px,transparent 1px 2px);"></div><svg style="left:60px;top:354px" width="10" height="12" viewBox="0 0 10 12" shape-rendering="crispEdges"><path fill="#000" d="M6 0h1v1h-1zM5 1h1v1h-1zM7 1h1v1h-1zM4 2h1v1h-1zM8 2h1v1h-1zM3 3h1v1h-1zM8 3h2v1h-2zM2 4h1v1h-1zM7 4h1v1h-1zM9 4h1v1h-1zM1 5h1v1h-1zM6 5h1v1h-1zM9 5h1v1h-1zM0 6h1v1h-1zM5 6h1v1h-1zM8 6h1v1h-1zM0 7h2v1h-2zM4 7h1v1h-1zM7 7h1v1h-1zM0 8h1v1h-1zM2 8h2v1h-2zM6 8h1v1h-1zM1 9h1v1h-1zM5 9h1v1h-1zM2 10h1v1h-1zM4 10h1v1h-1zM3 11h1v1h-1z"/><path fill="#00ffff" d="M6 1h1v1h-1zM5 2h3v1h-3zM4 3h4v1h-4zM3 4h4v1h-4zM2 5h4v1h-4zM1 6h4v1h-4zM2 7h2v1h-2z"/><path fill="#0000ff" d="M8 4h1v1h-1zM7 5h2v1h-2zM6 6h2v1h-2zM5 7h2v1h-2zM1 8h1v1h-1zM4 8h2v1h-2zM2 9h3v1h-3zM3 10h1v1h-1z"/></svg><span class="t" style="left:77.2px;top:353.50px;font:11px 'Liberation Sans',sans-serif;line-height:13px;color:#000;transform:scaleX(0.8956);transform-origin:0 0;">DIRXML_CURRDTTM_ST</span><div style="left:27px;top:376px;width:11px;height:1px;background:repeating-linear-gradient(to right,#808080 0 1px,transparent 1px 2px);"></div><div style="left:23px;top:372px;width:9px;height:9px;background:#fff;box-shadow:inset 0 0 0 1px #808080;"></div><div style="left:25px;top:376px;width:5px;height:1px;background:#000;"></div><div style="left:27px;top:374px;width:1px;height:5px;background:#000;"></div><svg style="left:39px;top:368px" width="15" height="15" viewBox="0 0 15 15" shape-rendering="crispEdges"><path fill="#000" d="M4 0h7v1h-7zM2 1h2v1h-2zM11 1h2v1h-2zM1 2h1v1h-1zM13 2h1v1h-1zM0 3h1v1h-1zM14 3h1v1h-1zM0 4h1v1h-1zM14 4h1v1h-1zM0 5h1v1h-1zM14 5h1v1h-1zM0 6h2v1h-2zM13 6h2v1h-2zM0 7h1v1h-1zM2 7h2v1h-2zM11 7h2v1h-2zM14 7h1v1h-1zM0 8h1v1h-1zM4 8h2v1h-2zM7 8h1v1h-1zM9 8h2v1h-2zM14 8h1v1h-1zM0 9h2v1h-2zM13 9h2v1h-2zM0 10h1v1h-1zM2 10h2v1h-2zM11 10h2v1h-2zM14 10h1v1h-1zM0 11h1v1h-1zM4 11h2v1h-2zM7 11h1v1h-1zM9 11h2v1h-2zM14 11h1v1h-1zM1 12h2v1h-2zM12 12h2v1h-2zM3 13h2v1h-2zM10 13h2v1h-2zM4 14h7v1h-7z"/><path fill="#fff" d="M4 1h1v1h-1zM6 1h1v1h-1zM8 1h1v1h-1zM10 1h1v1h-1zM3 2h1v1h-1zM5 2h1v1h-1zM7 2h1v1h-1zM9 2h1v1h-1zM11 2h1v1h-1zM2 3h1v1h-1zM4 3h1v1h-1zM6 3h1v1h-1zM8 3h1v1h-1zM10 3h1v1h-1zM12 3h1v1h-1zM1 4h1v1h-1zM3 4h1v1h-1zM5 4h1v1h-1zM7 4h1v1h-1zM9 4h1v1h-1zM11 4h1v1h-1zM13 4h1v1h-1zM2 5h1v1h-1zM4 5h1v1h-1zM6 5h1v1h-1zM8 5h1v1h-1zM10 5h1v1h-1zM12 5h1v1h-1zM3 6h1v1h-1zM5 6h1v1h-1zM7 6h1v1h-1zM9 6h1v1h-1zM11 6h1v1h-1zM4 7h1v1h-1zM6 7h1v1h-1zM8 7h1v1h-1zM10 7h1v1h-1zM4 9h1v1h-1zM6 9h1v1h-1zM8 9h1v1h-1zM10 9h1v1h-1zM5 10h1v1h-1zM7 10h1v1h-1zM9 10h1v1h-1zM6 11h1v1h-1zM8 11h1v1h-1zM5 12h1v1h-1zM7 12h1v1h-1zM9 12h1v1h-1zM6 13h1v1h-1zM8 13h1v1h-1z"/><path fill="#00ffff" d="M5 1h1v1h-1zM7 1h1v1h-1zM9 1h1v1h-1zM2 2h1v1h-1zM4 2h1v1h-1zM6 2h1v1h-1zM8 2h1v1h-1zM10 2h1v1h-1zM12 2h1v1h-1zM1 3h1v1h-1zM3 3h1v1h-1zM5 3h1v1h-1zM7 3h1v1h-1zM9 3h1v1h-1zM11 3h1v1h-1zM13 3h1v1h-1zM2 4h1v1h-1zM4 4h1v1h-1zM6 4h1v1h-1zM8 4h1v1h-1zM10 4h1v1h-1zM12 4h1v1h-1zM1 5h1v1h-1zM3 5h1v1h-1zM5 5h1v1h-1zM7 5h1v1h-1zM9 5h1v1h-1zM11 5h1v1h-1zM13 5h1v1h-1zM2 6h1v1h-1zM4 6h1v1h-1zM6 6h1v1h-1zM8 6h1v1h-1zM10 6h1v1h-1zM12 6h1v1h-1zM1 7h1v1h-1zM5 7h1v1h-1zM7 7h1v1h-1zM9 7h1v1h-1zM13 7h1v1h-1zM1 8h3v1h-3zM6 8h1v1h-1zM8 8h1v1h-1zM11 8h3v1h-3zM2 9h2v1h-2zM5 9h1v1h-1zM7 9h1v1h-1zM9 9h1v1h-1zM11 9h2v1h-2zM1 10h1v1h-1zM4 10h1v1h-1zM6 10h1v1h-1zM8 10h1v1h-1zM10 10h1v1h-1zM13 10h1v1h-1zM1 11h3v1h-3zM11 11h3v1h-3zM3 12h2v1h-2zM6 12h1v1h-1zM8 12h1v1h-1zM10 12h2v1h-2zM5 13h1v1h-1zM7 13h1v1h-1zM9 13h1v1h-1z"/></svg><span class="t" style="left:58.2px;top:369.50px;font:11px 'Liberation Sans',sans-serif;line-height:13px;color:#000;transform:scaleX(0.9012);transform-origin:0 0;">DIRXML_TRANS02</span></div>
<div style="left:301px;top:88px;width:16px;height:373px;background:repeating-conic-gradient(#fff 0 25%,#d5d4cc 0 50%) 0 0/2px 2px;"></div>
<div style="left:301px;top:88px;width:16px;height:16px;background:var(--face);box-shadow:inset -1px -1px #404040,inset 1px 1px #fff,inset -2px -2px #808080,inset 2px 2px #d4d0c8;"></div>
<svg style="left:305px;top:94px" width="7" height="4" viewBox="0 0 7 4" shape-rendering="crispEdges"><path fill="#000" d="M3 0h1v1h-1zM2 1h3v1h-3zM1 2h5v1h-5zM0 3h7v1h-7z"/></svg>
<div style="left:301px;top:104px;width:16px;height:201px;background:var(--face);box-shadow:inset -1px -1px #404040,inset 1px 1px #fff,inset -2px -2px #808080,inset 2px 2px #d4d0c8;"></div>
<div style="left:301px;top:445px;width:16px;height:16px;background:var(--face);box-shadow:inset -1px -1px #404040,inset 1px 1px #fff,inset -2px -2px #808080,inset 2px 2px #d4d0c8;"></div>
<svg style="left:305px;top:451px" width="7" height="4" viewBox="0 0 7 4" shape-rendering="crispEdges"><path fill="#000" d="M0 0h7v1h-7zM1 1h5v1h-5zM2 2h3v1h-3zM3 3h1v1h-1z"/></svg>
<div style="left:24px;top:466px;width:103px;height:26px;background:var(--face);box-shadow:inset 1px 0 #fff,inset -1px 0 #000,inset 0 -1px #000,inset -2px 0 #808080,inset 0 -2px #808080;"></div>
<div style="left:127px;top:468px;width:70px;height:21px;background:var(--face);box-shadow:inset 1px 0 #fff,inset -1px 0 #000,inset 0 -1px #000,inset -2px 0 #808080;"></div>
<svg style="left:30px;top:470px" width="16" height="16" viewBox="0 0 16 16" shape-rendering="crispEdges"><path fill="#000" d="M3 1h3v1h-3zM8 1h1v1h-1zM12 1h2v1h-2zM5 2h1v1h-1zM7 2h1v1h-1zM9 2h1v1h-1zM14 2h1v1h-1zM6 3h4v1h-4zM14 3h1v1h-1zM4 4h2v1h-2zM8 4h2v1h-2zM13 4h1v1h-1zM0 5h2v1h-2zM4 5h1v1h-1zM6 5h1v1h-1zM8 5h1v1h-1zM12 5h1v1h-1zM0 6h2v1h-2zM5 6h1v1h-1zM7 6h2v1h-2zM12 6h1v1h-1zM1 7h1v1h-1zM6 7h2v1h-2zM9 7h1v1h-1zM12 7h1v1h-1zM6 8h3v1h-3zM10 8h1v1h-1zM12 8h1v1h-1zM5 9h2v1h-2zM8 9h1v1h-1zM11 9h2v1h-2zM6 10h1v1h-1zM9 10h1v1h-1zM12 10h1v1h-1zM5 11h1v1h-1zM10 11h1v1h-1zM12 11h2v1h-2zM4 12h1v1h-1zM11 12h1v1h-1zM3 13h3v1h-3zM12 13h1v1h-1zM14 13h1v1h-1zM2 14h2v1h-2zM5 14h1v1h-1zM11 14h1v1h-1zM13 14h1v1h-1zM3 15h3v1h-3z"/><path fill="#fff" d="M11 1h1v1h-1zM11 2h1v1h-1zM11 3h2v1h-2zM12 4h1v1h-1zM5 5h1v1h-1zM6 6h1v1h-1zM8 7h1v1h-1zM9 8h1v1h-1zM9 9h2v1h-2zM10 10h2v1h-2zM11 11h1v1h-1zM13 12h1v1h-1zM4 14h1v1h-1z"/><path fill="#a0a0a0" d="M2 2h2v1h-2zM1 3h3v1h-3zM0 4h3v1h-3z"/><path fill="#00c000" d="M4 10h2v1h-2zM3 11h2v1h-2zM2 12h2v1h-2zM2 13h1v1h-1z"/><path fill="#008000" d="M1 13h1v1h-1z"/></svg>
<span class="t" style="left:47.95px;top:472.50px;font:bold 11px 'Liberation Sans',sans-serif;line-height:13px;color:#000;transform:scaleX(0.9677);transform-origin:0 0;">Development</span>
<svg style="left:129px;top:469px" width="16" height="15" viewBox="0 0 16 15" shape-rendering="crispEdges"><path fill="#800000" d="M6 0h2v1h-2zM3 1h1v1h-1zM6 1h3v1h-3zM2 3h1v1h-1zM2 4h1v1h-1zM3 5h2v1h-2z"/><path fill="#000" d="M6 3h2v1h-2zM13 3h2v1h-2zM4 4h2v1h-2zM12 4h2v1h-2zM1 5h2v1h-2zM9 5h1v1h-1zM8 6h2v1h-2zM12 6h2v1h-2zM1 7h2v1h-2zM9 7h1v1h-1zM8 8h2v1h-2zM12 8h2v1h-2zM1 9h2v1h-2zM9 9h1v1h-1zM8 10h2v1h-2zM12 10h2v1h-2zM1 11h2v1h-2zM9 11h1v1h-1zM8 12h2v1h-2zM12 12h2v1h-2zM1 13h2v1h-2zM9 13h1v1h-1zM8 14h2v1h-2z"/><path fill="#808000" d="M8 3h5v1h-5zM6 4h6v1h-6zM14 4h2v1h-2zM10 5h6v1h-6zM10 6h2v1h-2zM14 6h2v1h-2zM10 7h6v1h-6zM10 8h2v1h-2zM14 8h2v1h-2zM10 9h6v1h-6zM10 10h2v1h-2zM14 10h2v1h-2zM10 11h6v1h-6zM10 12h2v1h-2z"/><path fill="#00ffff" d="M0 5h1v1h-1zM5 5h4v1h-4zM0 6h8v1h-8zM0 7h1v1h-1zM4 7h5v1h-5zM0 8h3v1h-3zM4 8h4v1h-4zM0 9h1v1h-1zM4 9h5v1h-5zM0 10h3v1h-3zM4 10h4v1h-4zM0 11h1v1h-1zM4 11h5v1h-5zM0 12h3v1h-3zM4 12h4v1h-4zM0 13h1v1h-1zM4 13h5v1h-5zM0 14h3v1h-3zM4 14h4v1h-4z"/><path fill="#fff" d="M3 7h1v1h-1zM3 8h1v1h-1zM3 9h1v1h-1zM3 10h1v1h-1zM3 11h1v1h-1zM3 12h1v1h-1zM3 13h1v1h-1zM3 14h1v1h-1z"/></svg>
<span class="t" style="left:147.2px;top:471.50px;font:11px 'Liberation Sans',sans-serif;line-height:13px;color:#000;transform:scaleX(0.8364);transform-origin:0 0;">Upgrade</span>
</section>
<section id="sqldef" aria-label="SQL definition">
<div style="left:339px;top:74px;width:1px;height:426px;background:#fff;"></div>
<div style="left:345px;top:77px;width:184px;height:23px;background:#fff;box-shadow:inset 1px 1px #808080,inset -1px -1px #fff,inset 2px 2px #404040,inset -2px -2px #d4d0c8;"></div>
<div style="left:511px;top:79px;width:16px;height:19px;background:var(--face);box-shadow:inset -1px -1px #404040,inset 1px 1px #fff,inset -2px -2px #808080,inset 2px 2px #d4d0c8;"></div>
<svg style="left:515px;top:86px" width="7" height="4" viewBox="0 0 7 4" shape-rendering="crispEdges"><path fill="#000" d="M0 0h7v1h-7zM1 1h5v1h-5zM2 2h3v1h-3zM3 3h1v1h-1z"/></svg>
<span class="t" style="left:347.2px;top:80.50px;font:bold 11px 'Liberation Sans',sans-serif;line-height:13px;color:#000;letter-spacing:0.701px;">[default]</span>
<div style="left:343px;top:101px;width:372px;height:401px;background:#fff;box-shadow:inset 1px 1px #808080,inset -1px -1px #fff,inset 2px 2px #404040,inset -2px -2px #d4d0c8;"></div>
<span class="t m" style="left:354px;top:106.50px;font:11px 'Liberation Mono',monospace;line-height:13px;color:#000;letter-spacing:0.412px;">SELECT %DateTimeOut(dirxml_dttm)</span>
<span class="t m" style="left:354px;top:121.50px;font:11px 'Liberation Mono',monospace;line-height:13px;color:#000;letter-spacing:0.429px;">,dirxml_driver</span>
<span class="t m" style="left:354px;top:136.50px;font:11px 'Liberation Mono',monospace;line-height:13px;color:#000;letter-spacing:0.435px;">,dirxml_inst</span>
<span class="t m" style="left:354px;top:151.50px;font:11px 'Liberation Mono',monospace;line-height:13px;color:#000;letter-spacing:0.425px;">,dirxml_assoc_id</span>
<span class="t m" style="left:354px;top:166.50px;font:11px 'Liberation Mono',monospace;line-height:13px;color:#000;letter-spacing:0.429px;">,dirxml_status</span>
<span class="t m" style="left:354px;top:181.50px;font:11px 'Liberation Mono',monospace;line-height:13px;color:#000;letter-spacing:0.431px;">,dirxml_event</span>
<span class="t m" style="left:354px;top:196.50px;font:11px 'Liberation Mono',monospace;line-height:13px;color:#000;letter-spacing:0.411px;">,%DateTimeOut(%CurrentDateTimeIn)</span>
<span class="t m" style="left:354px;top:211.50px;font:11px 'Liberation Mono',monospace;line-height:13px;color:#000;letter-spacing:0.419px;">  FROM dirxml_trans01</span>
</section>
<section id="output" aria-label="Output window">
<div style="left:4px;top:500px;width:339px;height:1px;background:#808080;"></div>
<div style="left:4px;top:501px;width:339px;height:1px;background:#fff;"></div>
<div style="left:4px;top:505px;width:711px;height:1px;background:#808080;"></div>
<div style="left:4px;top:506px;width:711px;height:1px;background:#000;"></div>
<div style="left:15px;top:517px;width:690px;height:64px;background:#fff;box-shadow:inset 1px 0 #808080,inset 0 1px #000,inset 2px 0 #000,inset 0 2px #606060,inset 3px 0 #404040,inset -1px -1px #000;"></div>
<div style="left:18px;top:562px;width:685px;height:17px;background:var(--face);"></div>
<div style="left:18px;top:578px;width:685px;height:1px;background:#fff;"></div>
<div style="left:51px;top:562px;width:652px;height:1px;background:#000;"></div>
<div style="left:17px;top:563px;width:1px;height:17px;background:#fff;"></div>
<div style="left:18px;top:563px;width:16px;height:15px;background:var(--face);box-shadow:inset -1px -1px #404040,inset 1px 1px #fff,inset -2px -2px #808080,inset 2px 2px #d4d0c8;"></div>
<svg style="left:18px;top:563px" width="16" height="15" viewBox="0 0 16 15"><path d="M10.5 2.5v10l-6 -5z" fill="#808080"/></svg>
<div style="left:34px;top:563px;width:16px;height:15px;background:var(--face);box-shadow:inset -1px -1px #404040,inset 1px 1px #fff,inset -2px -2px #808080,inset 2px 2px #d4d0c8;"></div>
<svg style="left:34px;top:563px" width="16" height="15" viewBox="0 0 16 15"><path d="M6 2.5v10l6 -5z" fill="#808080"/></svg>
<div style="left:51px;top:563px;width:1px;height:15px;background:#000;"></div>
<svg style="left:0px;top:562px" width="300" height="17" viewBox="0 0 300 17"><path d="M146.5 0.5L151.5 15.5H191.5L195 0.5" fill="none" stroke="#000"/><path d="M93 0.5L97.5 15.5H143.5L147.5 0.5" fill="none" stroke="#000"/><path d="M51.5 0.5L57.5 15.5H88.5L93.5 0.5" fill="none" stroke="#000"/><path d="M195 -1L200 15.5H243.5L249.5 -1" fill="#fff" stroke="#000"/></svg>
<span class="t" style="left:62.5px;top:563.50px;font:11px 'Liberation Sans',sans-serif;line-height:13px;color:#000;transform:scaleX(0.8705);transform-origin:0 0;">Build</span>
<span class="t" style="left:102.5px;top:563.50px;font:11px 'Liberation Sans',sans-serif;line-height:13px;color:#000;transform:scaleX(0.8601);transform-origin:0 0;">Upgrade</span>
<span class="t" style="left:156.7px;top:563.50px;font:11px 'Liberation Sans',sans-serif;line-height:13px;color:#000;transform:scaleX(0.8477);transform-origin:0 0;">Results</span>
<span class="t" style="left:203.9px;top:563.50px;font:bold 11px 'Liberation Sans',sans-serif;line-height:13px;color:#000;transform:scaleX(0.8875);transform-origin:0 0;">Validate</span>
<div style="left:686px;top:520px;width:16px;height:42px;background:repeating-conic-gradient(#fff 0 25%,#d5d4cc 0 50%) 0 0/2px 2px;"></div>
<div style="left:686px;top:520px;width:16px;height:15px;background:var(--face);box-shadow:inset -1px -1px #404040,inset 1px 1px #fff,inset -2px -2px #808080,inset 2px 2px #d4d0c8;"></div>
<svg style="left:690px;top:526px" width="7" height="4" viewBox="0 0 7 4" shape-rendering="crispEdges"><path fill="#000" d="M3 0h1v1h-1zM2 1h3v1h-3zM1 2h5v1h-5zM0 3h7v1h-7z"/></svg>
<div style="left:686px;top:535px;width:16px;height:9px;background:var(--face);box-shadow:inset -1px -1px #404040,inset 1px 1px #fff,inset -2px -2px #808080,inset 2px 2px #d4d0c8;"></div>
<div style="left:686px;top:546px;width:16px;height:16px;background:var(--face);box-shadow:inset -1px -1px #404040,inset 1px 1px #fff,inset -2px -2px #808080,inset 2px 2px #d4d0c8;"></div>
<svg style="left:690px;top:552px" width="7" height="4" viewBox="0 0 7 4" shape-rendering="crispEdges"><path fill="#000" d="M0 0h7v1h-7zM1 1h5v1h-5zM2 2h3v1h-3zM3 3h1v1h-1z"/></svg>
</section>
<section id="statusbar" aria-label="Status bar">
<div style="left:4px;top:591px;width:711px;height:1px;background:#808080;"></div>
<div style="left:4px;top:592px;width:711px;height:1px;background:#fff;"></div>
<span class="t" style="left:5.3px;top:596.50px;font:11px 'Liberation Sans',sans-serif;line-height:13px;color:#000;letter-spacing:-0.074px;">Ready</span>
<div style="left:501px;top:595px;width:70px;height:16px;box-shadow:inset 1px 1px #808080,inset -1px -1px #fff;"></div>
<div style="left:573px;top:595px;width:26px;height:16px;box-shadow:inset 1px 1px #808080,inset -1px -1px #fff;"></div>
<div style="left:601px;top:595px;width:28px;height:16px;box-shadow:inset 1px 1px #808080,inset -1px -1px #fff;"></div>
<div style="left:631px;top:595px;width:31px;height:16px;box-shadow:inset 1px 1px #808080,inset -1px -1px #fff;"></div>
<div style="left:664px;top:595px;width:33px;height:16px;box-shadow:inset 1px 1px #808080,inset -1px -1px #fff;"></div>
<svg style="left:702px;top:598px" width="13" height="13" viewBox="0 0 13 13"><path d="M12 1L1 12M12 5L5 12M12 9L9 12" stroke="#808080" fill="none"/><path d="M12 0L0 12M12 4L4 12M12 8L8 12" stroke="#fff" fill="none"/></svg>
</section>
</div></body></html>
